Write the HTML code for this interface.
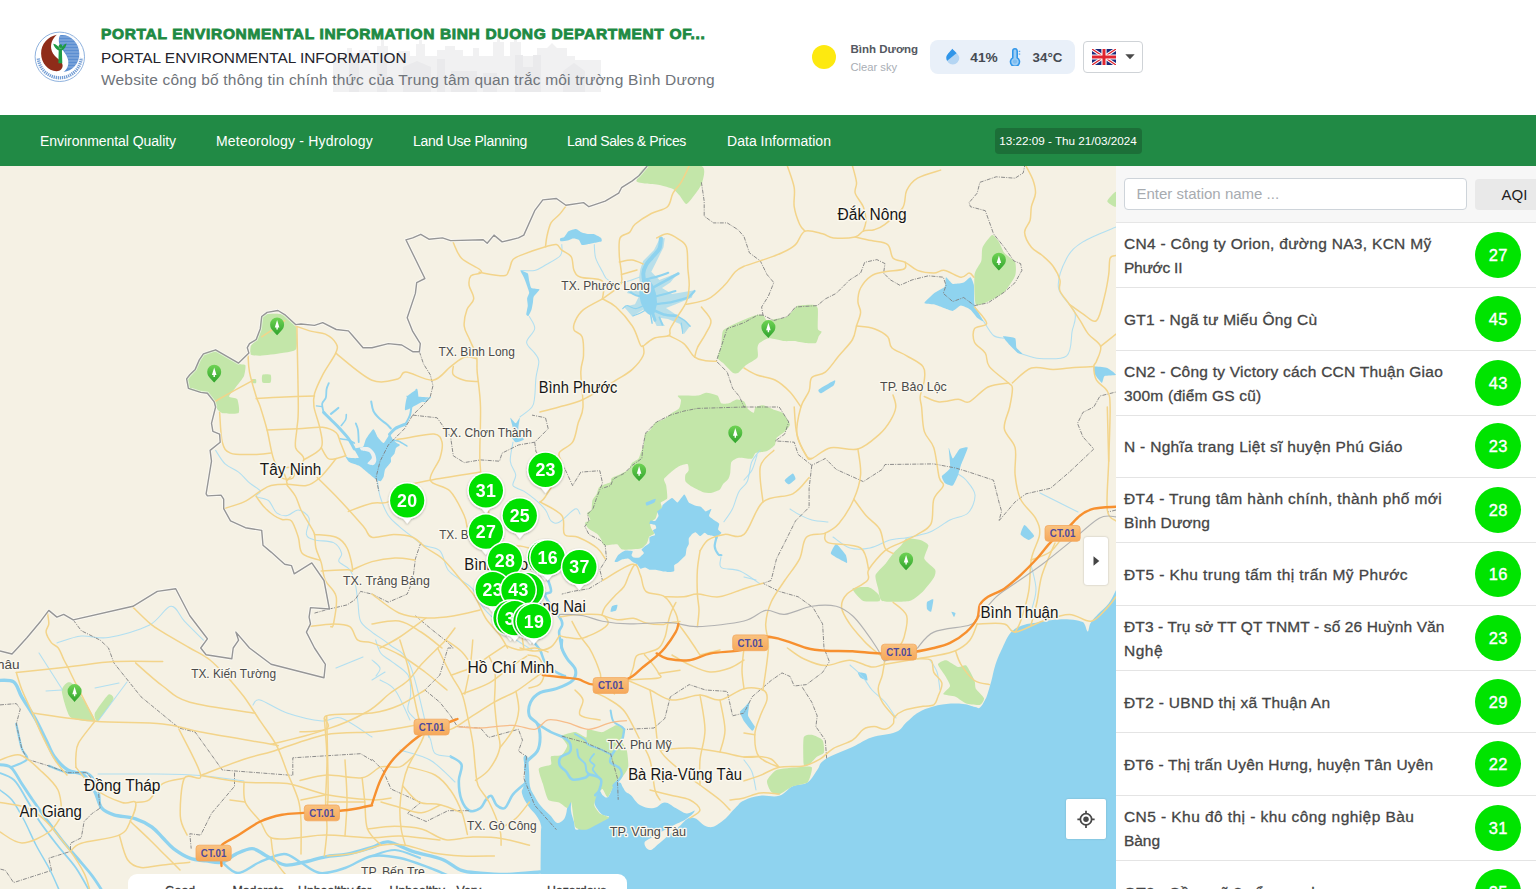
<!DOCTYPE html>
<html lang="en"><head><meta charset="utf-8"><title>Portal Environmental Information</title>
<style>
*{box-sizing:border-box;margin:0;padding:0}
html,body{width:1536px;height:889px;overflow:hidden;background:#fff;font-family:"Liberation Sans",sans-serif;}
body{position:relative}
.abs{position:absolute;white-space:nowrap}
#hdr{position:absolute;left:0;top:0;width:1536px;height:115px;background:#fff}
#sky{position:absolute;left:333px;top:33px}
#t1{left:101px;top:25px;font-size:15.5px;line-height:18px;font-weight:700;color:#1e8a43;letter-spacing:.66px;-webkit-text-stroke:.85px #1e8a43}
#t2{left:101px;top:48.5px;font-size:15.4px;line-height:18px;color:#23232b}
#t3{left:101px;top:71px;font-size:15.5px;line-height:18px;color:#6f747a;letter-spacing:.18px}
#sun{position:absolute;left:811.5px;top:44.5px;width:24.6px;height:24.6px;border-radius:50%;background:#fde910}
#w1{left:850.5px;top:41.5px;font-size:11.5px;line-height:14px;font-weight:700;color:#545861}
#w2{left:850.5px;top:60px;font-size:11.2px;line-height:14px;color:#a9aeb5}
#pill{position:absolute;left:930px;top:40px;width:144.5px;height:34px;border-radius:8px;background:#e9f0f9}
#h41{left:970.3px;top:49.7px;font-size:13.7px;line-height:16px;font-weight:700;color:#454a52}
#h34{left:1032.6px;top:49.7px;font-size:13.3px;line-height:16px;font-weight:700;color:#454a52}
#flagbox{position:absolute;left:1083px;top:41px;width:59.5px;height:32px;border:1px solid #cfd3d7;border-radius:4px;background:#fff}
#nav{position:absolute;left:0;top:115px;width:1536px;height:51px;background:#218a45}
.ni{position:absolute;top:18px;font-size:14px;line-height:17px;color:#fff;white-space:nowrap}
#time{position:absolute;left:994.5px;top:12.8px;width:147px;height:26px;border-radius:4px;background:#1c6f38;color:#fff;font-size:11.7px;line-height:26px;text-align:center;white-space:nowrap}
#map{position:absolute;left:0;top:166px;width:1116px;height:723px;overflow:hidden;background:#f5f1e4}
#panel{position:absolute;left:1116px;top:166px;width:420px;height:723px;background:#fff;overflow:hidden}
#srow{position:absolute;left:0;top:0;width:420px;height:56.9px;background:#f7f7f7;border-bottom:1px solid #e6e6e6}
#inp{position:absolute;left:8px;top:12px;width:343px;height:31.5px;border:1px solid #ced4da;border-radius:4px;background:#fff;font-size:15px;line-height:29px;color:#a7abb0;padding-left:11.5px;white-space:nowrap}
#aqi{position:absolute;left:359px;top:12.5px;width:80px;height:31.5px;border-radius:4px;background:#e9e9e9;font-size:15px;line-height:31.5px;color:#222;padding-left:26.5px}
.it{position:absolute;left:0;width:420px;border-bottom:1px solid #e4e4e4;background:#fff}
.it .tx{position:absolute;left:8px;font-size:15.5px;line-height:24px;color:#454545;letter-spacing:.3px;-webkit-text-stroke:.3px #454545;white-space:nowrap}
.it .c{position:absolute;left:359.2px;width:46px;height:46px;border-radius:50%;background:#00e400;color:#fff;font-size:16.5px;line-height:46px;text-align:center;-webkit-text-stroke:.35px #fff;letter-spacing:.2px}
#tog{position:absolute;left:1084px;top:537px;width:23.5px;height:47.5px;background:#fff;border-radius:3px;box-shadow:0 0 2px rgba(0,0,0,.25)}
#loc{position:absolute;left:1066px;top:799px;width:40px;height:40px;background:#fff;border-radius:2px;box-shadow:0 0 2px rgba(0,0,0,.18)}
#legend{position:absolute;left:128px;top:873.5px;width:499px;height:40px;background:#fff;border-radius:9px}
#legend span{position:absolute;top:10px;font-size:12.3px;line-height:14px;color:#3a3a3a;-webkit-text-stroke:.3px #3a3a3a;white-space:nowrap}
</style></head><body>
<div id="hdr">
<svg id="sky" width="269" height="59" viewBox="0 0 269 59">
<path d="M0 59V24h6v-4h8v-5h5v5h7v-3h10v6h8v-10h4v-6h3v6h4v10h10v-5h12v5h6v-12h3v-4h3v4h3v12h12v-6h8v-4h10v4h8v6h10v-8h6v8h14v-14h4v-8h3v8h4v14h6v-14h4v-8h3v8h4v14h16v-8h10l5-5 5 5h10v8h8v4h26V59Z" fill="#f1f1f2"/>
<g fill="#eaeaec"><path d="M16 59V30h10v29zM44 59V22h10v37zM70 59V34l14-6 14 6v25zM104 59V26h8v33zM118 59V38h26v21zM150 59V40h14v19zM182 59V22h8v37zM200 59V22h8v37zM190 59V34h10v25zM230 59V38l11-8 11 8v21z"/></g>
</svg>
<svg class="abs" style="left:34px;top:31px" width="52" height="52" viewBox="0 0 52 52">
<circle cx="25.8" cy="25.8" r="24.7" fill="#fff" stroke="#8fb2de" stroke-width="1"/>
<path d="M4.3 27.5 A21.6 21.6 0 0 0 47.3 27" fill="none" stroke="#5a8ccd" stroke-width="3.2" stroke-dasharray="1.3 .8" opacity=".85"/>
<path d="M22.8 3.8 C14 5.5 7 13 7.1 22.5 C7.2 32 14 40 22.5 40.2 C26 40.3 29 37.5 28.6 34 C28 29 20.5 27 17.8 20 C15.6 13.5 18.6 7.5 22.8 3.8Z" fill="#8f2c19"/>
<path d="M26 4.3 C34 2.4 45 10 45.3 22.5 C45.5 33 38 40 29.5 41 C33 38.5 35.2 34 34 28.5 C32.5 22 26.8 18.5 25.2 12.5 C24.4 9.5 24.9 6.4 26 4.3Z" fill="#5b8ed1"/>
<path d="M26 6h14M25.5 9h18M26 12h19M27 15h18.5M29 18h17M31 21h15M32.5 24h13.5M33.5 27h12M34 30h11M33.8 33h9M32.5 36h8" stroke="#d8e6f6" stroke-width=".55" opacity=".8"/>
<path d="M24.4 32.3 L24.7 19.5 C22.5 18.6 20 16 19.2 12.8 C22 13.2 24.6 15.2 25.6 17.5 C26 17 27 17 27.4 17.5 C28.3 15 30.5 13 32.6 12.6 C32.2 15.8 30.2 18.5 27.9 19.6 L28.3 32.3 Z" fill="#1f9b45"/>
<circle cx="26.5" cy="15.2" r="1.9" fill="#1f9b45"/>
</svg>
<div id="t1" class="abs">PORTAL ENVIRONMENTAL INFORMATION BINH DUONG DEPARTMENT OF...</div>
<div id="t2" class="abs">PORTAL ENVIRONMENTAL INFORMATION</div>
<div id="t3" class="abs">Website công bố thông tin chính thức của Trung tâm quan trắc môi trường Bình Dương</div>
<div id="sun"></div>
<div id="w1" class="abs">Bình Dương</div>
<div id="w2" class="abs">Clear sky</div>
<div id="pill"></div>
<svg class="abs" style="left:944px;top:47px" width="18" height="19" viewBox="0 0 18 19">
<defs><clipPath id="dc"><path d="M0 0H13L15.8 3.6 1.4 15.2H0Z"/></clipPath></defs>
<path id="dp" d="M8.3 1.7C11 5 15.3 7.5 15.3 10.9A6.5 6.5 0 1 1 2.3 10.9C2.3 7.5 6 5 8.3 1.7Z" fill="#b4d5f3"/>
<path d="M8.3 1.7C11 5 15.3 7.5 15.3 10.9A6.5 6.5 0 1 1 2.3 10.9C2.3 7.5 6 5 8.3 1.7Z" fill="#2f95e9" clip-path="url(#dc)"/></svg>
<div id="h41" class="abs">41%</div>
<svg class="abs" style="left:1009.1px;top:47.7px" width="12.9" height="18.4" viewBox="0 0 14 20">
<path d="M4.1 3.3a2.4 2.4 0 0 1 4.8 0V10.7a4.9 4.9 0 1 1 -4.8 0Z" fill="#9dcdf4" stroke="#2f95e9" stroke-width="1.7"/>
<circle cx="6.5" cy="14.8" r="2.3" fill="#7fbdf0"/>
<path d="M10.6 3.6h1.6M10.6 6.6h1.6" stroke="#2f95e9" stroke-width="1"/></svg>
<div id="h34" class="abs">34°C</div>
<div id="flagbox"><svg class="abs" style="left:7.8px;top:6.8px" width="24" height="16" viewBox="0 0 60 40" preserveAspectRatio="none">
<rect width="60" height="40" fill="#1b2a7b"/>
<path d="M0 0L60 40M60 0L0 40" stroke="#fff" stroke-width="8"/>
<path d="M0 0L60 40M60 0L0 40" stroke="#e0242f" stroke-width="3.2"/>
<path d="M30 0V40M0 20H60" stroke="#fff" stroke-width="13"/>
<path d="M30 0V40M0 20H60" stroke="#e0242f" stroke-width="7.5"/></svg>
<svg class="abs" style="left:40.5px;top:12px" width="10" height="6" viewBox="0 0 10 6"><path d="M0.3 0.3h9.4L5 5.3z" fill="#4a4a4a"/></svg></div>
</div>
<div id="nav"><div class="ni" style="left:40px;letter-spacing:-0.045px">Environmental Quality</div><div class="ni" style="left:216px;letter-spacing:0.195px">Meteorology - Hydrology</div><div class="ni" style="left:413px;letter-spacing:-0.254px">Land Use Planning</div><div class="ni" style="left:567px;letter-spacing:-0.373px">Land Sales &amp; Prices</div><div class="ni" style="left:727px;letter-spacing:0.031px">Data Information</div><div id="time">13:22:09 - Thu 21/03/2024</div></div>
<div id="map"><svg width="1116" height="723" viewBox="0 166 1116 723" style="position:absolute;left:0;top:0" font-family="'Liberation Sans',sans-serif"><rect x="0" y="166" width="1116" height="723" fill="#f5f1e4"/><path d="M540.2 893.0 C540.3 888.4 540.5 881.7 540.6 870.0 C540.7 858.3 540.8 843.5 540.9 834.5 C541.0 825.5 541.8 828.8 540.9 825.0 C540.0 821.2 538.7 819.4 536.2 815.6 C533.7 811.8 531.1 810.5 528.3 806.1 C525.5 801.7 522.9 797.6 522.0 793.5 C521.1 789.4 523.0 790.1 523.6 785.7 C524.2 781.3 525.2 777.2 525.2 771.5 C525.2 765.8 523.1 760.1 523.6 757.3 C524.1 754.5 526.5 754.5 527.6 757.3 C528.7 760.1 528.6 765.8 529.1 771.5 C529.6 777.2 528.9 781.0 529.9 785.7 C530.9 790.4 531.7 791.0 533.9 795.1 C536.1 799.2 537.6 802.0 540.9 806.1 C544.2 810.2 547.2 812.3 550.4 815.6 C553.6 818.9 554.2 821.8 556.7 822.7 C559.2 823.6 561.1 822.0 563.0 820.3 C564.9 818.6 565.2 816.8 566.1 814.0 C567.0 811.2 566.7 808.6 567.7 806.1 C568.7 803.6 570.2 800.4 570.9 801.4 C571.6 802.4 570.4 806.8 571.0 810.9 C571.6 815.0 572.9 818.1 574.0 821.9 C575.1 825.7 574.2 829.2 576.4 829.8 C578.6 830.4 581.4 826.4 585.0 825.0 C588.6 823.6 589.8 824.3 594.5 822.7 C599.2 821.1 607.1 818.8 608.7 817.2 C610.3 815.6 604.6 816.4 602.4 814.8 C600.2 813.2 599.2 811.7 597.6 809.3 C596.0 806.9 595.0 805.8 594.5 803.0 C594.0 800.2 594.4 797.6 595.3 795.1 C596.2 792.6 597.7 790.3 599.2 790.4 C600.7 790.5 601.4 794.1 603.0 795.5 C604.6 796.9 605.7 797.9 607.1 797.5 C608.5 797.1 608.9 795.9 610.2 793.5 C611.5 791.1 611.5 787.9 613.4 785.7 C615.3 783.5 617.8 782.2 619.7 782.5 C621.6 782.8 621.5 785.3 622.8 787.2 C624.1 789.1 624.4 790.4 626.0 792.0 C627.6 793.6 627.8 792.4 630.7 795.1 C633.6 797.8 635.7 802.7 640.4 805.3 C645.1 807.9 649.1 808.6 654.0 808.0 C658.9 807.4 660.5 802.5 664.8 802.5 C669.1 802.5 671.4 805.8 675.7 808.0 C680.0 810.2 682.7 812.9 686.5 813.4 C690.3 813.9 694.7 809.6 694.7 810.7 C694.7 811.8 691.4 815.5 686.5 818.8 C681.6 822.1 677.3 823.2 670.3 827.0 C663.3 830.8 656.5 834.6 651.3 837.8 C646.1 841.0 644.8 840.8 644.5 843.2 C644.2 845.6 646.9 850.0 649.9 850.0 C652.9 850.0 653.7 847.8 659.4 843.2 C665.1 838.6 671.9 832.1 678.4 827.0 C684.9 821.9 686.0 817.5 692.0 817.5 C698.0 817.5 702.2 826.2 708.2 827.0 C714.2 827.8 716.4 825.3 721.8 821.5 C727.2 817.7 730.9 812.2 735.3 808.0 C739.7 803.8 739.0 802.9 744.0 800.5 C749.0 798.1 753.3 796.7 760.3 795.8 C767.3 794.9 772.7 797.7 779.2 795.8 C785.7 793.9 787.1 789.0 792.8 786.3 C798.5 783.6 802.8 785.5 807.7 782.2 C812.6 778.9 813.7 774.6 817.2 770.0 C820.7 765.4 818.2 763.8 825.3 759.2 C832.4 754.6 843.3 751.3 852.5 747.0 C861.7 742.7 862.7 740.5 871.4 737.5 C880.1 734.5 888.7 735.2 895.8 732.1 C902.9 729.0 902.2 725.9 906.7 722.0 C911.2 718.1 913.3 715.4 918.4 712.4 C923.5 709.4 926.8 708.5 932.4 706.8 C938.0 705.1 940.2 704.6 946.4 704.0 C952.6 703.4 957.5 703.4 963.2 704.0 C968.9 704.6 971.6 706.3 975.0 707.0 C978.4 707.7 978.0 708.9 980.0 707.5 C982.0 706.1 983.5 702.7 985.0 700.0 C986.5 697.3 986.3 697.7 987.5 694.0 C988.7 690.3 989.6 687.4 991.2 681.6 C992.8 675.8 993.2 671.5 995.4 664.8 C997.6 658.1 999.3 654.4 1002.4 648.0 C1005.5 641.6 1006.9 637.1 1010.8 632.6 C1014.7 628.1 1017.0 627.6 1022.0 625.6 C1027.0 623.6 1029.8 623.9 1036.0 622.8 C1042.2 621.7 1046.1 620.7 1052.8 620.0 C1059.5 619.3 1064.0 619.2 1069.6 619.5 C1075.2 619.8 1078.0 620.6 1081.0 621.5 C1084.0 622.4 1083.1 622.0 1084.5 624.0 C1085.9 626.0 1086.6 631.7 1087.8 631.5 C1089.0 631.3 1088.6 626.4 1090.6 623.0 C1092.6 619.6 1094.0 618.4 1097.6 614.4 C1101.2 610.4 1105.2 608.0 1108.8 603.2 C1112.4 598.4 1113.6 594.4 1115.8 590.6 C1118.0 586.8 1119.2 585.3 1120.0 584.0 L1120 895 L540.2 895Z" fill="#8fd3ef"/><g fill="#c3e6a9"><path d="M261.7 316.5 C262.4 315.0 264.8 314.0 267.0 313.8 C269.2 313.6 280.4 313.4 283.3 314.6 C286.2 315.8 294.3 322.6 295.6 326.0 C296.9 329.4 297.5 346.3 296.1 349.0 C294.7 351.7 285.6 352.4 282.0 353.1 C278.4 353.8 263.4 355.7 260.3 355.8 C257.2 355.9 251.8 355.3 250.8 354.4 C249.9 353.4 250.3 347.8 250.8 346.3 C251.3 344.8 255.2 341.3 256.2 339.5 C257.1 337.7 259.8 331.0 260.3 328.7 C260.9 326.4 261.0 318.0 261.7 316.5Z"/><path d="M215.6 350.4 C219.1 351.3 235.6 361.9 238.6 363.4 C241.6 364.9 244.9 364.0 245.4 365.3 C245.9 366.6 244.9 373.9 244.0 376.1 C243.1 378.3 237.4 385.0 235.9 387.0 C234.4 389.0 229.0 395.3 229.1 396.5 C229.2 397.7 236.4 397.6 237.3 399.2 C238.2 400.8 240.1 411.6 238.6 413.0 C237.1 414.4 224.3 413.6 222.0 413.0 C219.7 412.4 216.4 408.1 215.6 407.0 C214.8 405.9 215.0 403.3 214.2 401.9 C213.4 400.5 209.8 394.4 207.4 393.2 C205.0 392.0 191.9 391.1 189.8 389.7 C187.7 388.3 186.1 380.9 186.6 378.9 C187.1 376.9 193.5 371.9 195.2 369.4 C196.9 366.9 201.4 355.8 203.4 353.9 C205.4 352.0 212.1 349.4 215.6 350.4Z"/><path d="M262.5 374.8 C263.3 374.0 269.8 374.0 270.6 374.8 C271.4 375.6 271.4 381.6 270.6 382.4 C269.8 383.2 263.3 383.2 262.5 382.4 C261.7 381.6 261.7 375.6 262.5 374.8Z"/><path d="M252.0 379.4 C252.4 379.0 255.6 379.0 256.0 379.4 C256.4 379.8 256.4 382.6 256.0 383.0 C255.6 383.4 252.4 383.4 252.0 383.0 C251.6 382.6 251.6 379.8 252.0 379.4Z"/><path d="M647.2 166.0 C653.7 164.5 695.9 164.4 701.4 166.0 C706.9 167.6 702.8 179.6 702.3 182.3 C701.8 185.0 697.6 190.9 696.0 193.1 C694.4 195.3 688.1 203.7 686.5 204.0 C684.9 204.3 681.1 197.3 679.8 195.8 C678.4 194.3 675.0 190.1 673.0 189.0 C671.0 187.9 662.1 185.5 659.4 185.0 C656.7 184.5 648.2 184.0 645.9 183.6 C643.6 183.2 636.3 182.7 636.4 180.9 C636.5 179.1 640.7 167.5 647.2 166.0Z"/><path d="M723.1 330.6 C724.6 328.3 733.2 324.4 736.5 322.9 C739.8 321.4 752.9 316.1 755.6 315.3 C758.3 314.5 762.1 314.7 763.3 315.3 C764.4 315.9 766.0 320.6 767.1 321.0 C768.2 321.4 772.8 319.5 774.7 319.1 C776.6 318.7 784.3 318.1 786.2 317.2 C788.1 316.2 792.8 310.8 793.9 309.6 C795.0 308.5 795.8 306.2 797.7 305.7 C799.6 305.2 811.0 304.5 813.0 304.8 C815.0 305.1 817.3 306.2 817.8 308.6 C818.3 311.0 817.4 326.4 817.8 328.7 C818.2 331.0 821.5 330.8 821.6 331.6 C821.7 332.4 819.3 335.2 818.7 336.3 C818.1 337.4 817.2 342.3 815.9 343.0 C814.6 343.7 807.5 343.2 805.3 343.0 C803.1 342.8 796.0 341.3 793.9 341.1 C791.8 340.9 786.8 341.4 784.3 341.1 C781.8 340.8 771.5 338.0 769.0 338.2 C766.5 338.4 760.5 342.0 759.4 343.0 C758.2 344.0 757.7 346.4 757.5 347.8 C757.3 349.2 758.6 355.7 757.5 357.4 C756.4 359.1 748.0 363.5 746.1 365.0 C744.2 366.5 739.7 371.9 738.4 372.7 C737.1 373.5 734.2 373.7 732.7 372.7 C731.2 371.7 724.6 364.6 723.1 363.1 C721.6 361.6 717.6 359.1 717.4 357.4 C717.2 355.7 720.6 348.6 721.2 345.9 C721.8 343.2 721.6 332.9 723.1 330.6Z"/><path d="M992.1 235.1 C993.7 234.6 997.7 240.1 998.9 241.9 C1000.1 243.7 1002.7 250.8 1004.3 252.8 C1005.9 254.8 1014.0 260.0 1015.1 262.3 C1016.2 264.6 1016.2 272.8 1015.1 275.8 C1014.0 278.8 1007.0 289.5 1004.3 292.1 C1001.6 294.7 990.9 300.4 988.0 301.6 C985.1 302.8 977.1 307.0 975.8 304.3 C974.4 301.6 974.0 278.8 974.5 274.5 C975.0 270.2 980.5 263.6 981.3 260.9 C982.1 258.2 981.5 249.9 982.6 247.3 C983.7 244.7 990.5 235.6 992.1 235.1Z"/><path d="M1107.3 201.2 C1107.3 199.7 1115.1 191.2 1116.0 191.8 C1116.9 192.4 1116.9 205.8 1116.0 206.7 C1115.1 207.6 1107.3 202.7 1107.3 201.2Z"/><path d="M678.2 395.6 C679.9 395.2 695.4 395.9 698.2 395.6 C701.0 395.3 704.0 392.8 705.9 392.8 C707.8 392.8 715.9 394.6 717.4 395.6 C718.9 396.7 720.1 402.5 721.2 403.3 C722.3 404.1 727.3 403.7 728.8 403.3 C730.3 402.9 735.0 399.6 736.5 399.4 C738.0 399.2 743.0 400.4 744.1 401.4 C745.2 402.4 747.0 407.9 748.0 409.0 C749.0 410.1 752.9 413.0 753.7 412.8 C754.5 412.6 754.6 407.9 755.6 407.1 C756.6 406.3 761.4 404.9 763.3 405.2 C765.2 405.5 772.8 409.2 774.7 410.0 C776.6 410.8 780.9 411.4 782.4 412.8 C783.9 414.2 789.8 422.4 790.0 424.3 C790.2 426.2 785.6 430.7 784.3 432.0 C783.0 433.3 777.7 436.4 776.7 437.7 C775.7 439.0 775.7 444.0 774.7 445.3 C773.7 446.6 769.0 450.3 767.1 451.1 C765.2 451.9 757.1 452.2 755.6 453.0 C754.1 453.8 753.5 458.2 751.8 458.7 C750.1 459.2 740.8 457.4 738.8 457.7 C736.8 458.0 732.2 460.5 731.4 462.0 C730.5 463.5 730.6 471.0 730.3 472.7 C730.0 474.4 729.0 477.9 728.2 479.1 C727.5 480.3 723.7 483.3 722.8 484.4 C721.9 485.5 720.8 488.9 719.6 489.8 C718.4 490.7 712.8 492.8 711.1 493.0 C709.4 493.2 704.4 492.5 702.5 491.9 C700.6 491.3 693.5 487.7 691.8 486.6 C690.1 485.5 686.0 482.4 685.4 481.2 C684.8 480.0 685.1 475.9 685.4 474.8 C685.7 473.7 688.4 471.6 688.6 470.5 C688.8 469.4 688.5 464.5 687.5 464.1 C686.5 463.7 680.7 465.4 679.0 466.3 C677.3 467.2 671.9 471.4 670.4 472.7 C668.9 474.0 664.4 477.8 664.0 479.1 C663.6 480.4 665.9 483.6 666.2 485.5 C666.5 487.4 667.7 496.6 667.2 498.3 C666.7 500.0 661.3 501.6 660.8 502.6 C660.3 503.6 662.2 506.9 661.9 507.9 C661.6 508.9 658.2 511.1 657.6 512.2 C657.0 513.3 656.2 517.5 655.5 518.6 C654.8 519.7 650.5 521.9 650.1 522.9 C649.7 523.9 650.8 527.1 651.2 528.2 C651.6 529.3 654.6 532.7 654.4 533.6 C654.2 534.5 649.9 535.8 649.1 536.8 C648.4 537.8 647.8 542.0 646.9 543.2 C646.0 544.4 643.0 547.9 640.5 548.5 C638.0 549.1 624.8 550.0 622.4 549.6 C620.0 549.2 618.8 544.7 617.0 544.3 C615.2 543.9 605.8 545.8 604.2 545.3 C602.6 544.8 601.8 540.1 601.0 538.9 C600.2 537.7 598.0 534.7 596.7 533.6 C595.4 532.5 589.4 529.3 588.2 528.2 C587.0 527.1 584.8 523.8 585.0 522.9 C585.2 522.0 590.1 520.7 590.3 519.7 C590.5 518.7 587.0 514.3 587.1 513.3 C587.2 512.3 590.9 511.4 591.4 510.1 C591.9 508.8 591.9 502.0 592.4 500.4 C592.9 498.8 596.1 495.3 596.7 494.0 C597.4 492.7 598.1 488.6 598.9 487.6 C599.6 486.6 603.0 484.9 604.2 484.4 C605.4 483.9 609.9 482.9 610.6 482.3 C611.4 481.7 610.6 478.9 611.7 478.0 C612.8 477.1 619.6 474.6 621.3 473.7 C623.0 472.8 627.7 470.6 628.8 469.5 C629.9 468.4 631.0 464.1 632.0 463.0 C633.0 461.9 637.5 459.8 638.4 458.8 C639.2 457.8 640.0 454.8 640.5 453.4 C641.0 452.0 643.3 446.8 643.7 444.9 C644.1 443.0 644.2 435.7 644.8 434.2 C645.4 432.7 649.0 431.1 650.1 429.9 C651.2 428.7 654.1 423.5 655.5 422.4 C656.9 421.3 662.5 420.1 664.0 419.2 C665.5 418.3 668.9 415.0 670.4 413.9 C671.9 412.8 677.9 409.9 679.0 408.5 C680.1 407.1 681.1 401.3 681.0 400.0 C680.9 398.7 676.5 396.0 678.2 395.6Z"/><path d="M906.7 538.5 C908.6 538.0 918.0 539.2 920.2 539.9 C922.4 540.6 928.0 543.4 928.4 545.3 C928.8 547.2 923.6 556.4 924.3 558.8 C925.0 561.2 934.2 567.8 935.2 569.7 C936.2 571.6 935.0 575.6 933.8 577.8 C932.6 580.0 925.4 589.1 923.0 591.4 C920.6 593.7 913.5 599.9 909.4 600.9 C905.3 601.9 885.4 602.1 882.3 600.9 C879.2 599.7 878.9 591.3 878.2 588.7 C877.5 586.1 874.8 577.5 875.5 575.1 C876.2 572.7 883.2 566.5 885.0 564.3 C886.8 562.1 891.5 555.3 893.1 553.4 C894.7 551.5 899.9 546.8 901.3 545.3 C902.7 543.8 904.8 539.0 906.7 538.5Z"/><path d="M852.5 588.7 C853.0 587.3 866.1 586.8 868.7 587.3 C871.3 587.8 877.1 592.7 878.2 594.1 C879.3 595.5 881.1 600.2 879.6 600.9 C878.1 601.6 866.0 602.1 863.3 600.9 C860.6 599.7 852.0 590.1 852.5 588.7Z"/><path d="M66.4 683.2 C67.5 682.5 70.4 680.9 73.2 684.6 C76.0 688.3 95.2 716.6 94.9 719.9 C94.6 723.2 73.8 720.1 70.5 717.2 C67.2 714.4 62.2 694.8 61.8 691.4 C61.4 688.0 65.3 683.9 66.4 683.2Z"/><path d="M94.9 713.1 C96.0 710.4 106.7 696.0 108.5 694.6 C110.3 693.2 114.4 696.8 113.3 699.5 C112.2 702.2 99.4 719.8 97.6 721.2 C95.8 722.6 93.8 715.8 94.9 713.1Z"/><path d="M538.8 768.7 C539.6 766.8 549.8 765.8 551.0 764.6 C552.2 763.4 549.9 757.5 551.0 756.5 C552.1 755.5 560.2 756.2 561.8 755.1 C563.4 754.0 567.2 747.5 567.2 745.6 C567.2 743.7 561.0 737.5 561.8 736.1 C562.6 734.8 573.0 732.0 575.4 732.1 C577.8 732.2 585.0 737.8 586.2 737.5 C587.4 737.2 586.0 729.8 587.6 729.3 C589.2 728.8 599.7 732.5 602.5 732.1 C605.3 731.7 613.8 725.6 616.0 725.3 C618.2 725.0 623.7 727.8 624.2 729.3 C624.8 730.8 621.2 738.0 621.5 740.2 C621.8 742.4 626.2 748.3 626.9 751.0 C627.6 753.7 628.7 764.6 628.2 767.3 C627.7 770.0 622.7 776.8 621.5 778.2 C620.3 779.6 617.4 779.0 616.0 780.9 C614.6 782.8 609.2 796.3 607.9 797.1 C606.5 797.9 603.6 789.3 602.5 789.0 C601.4 788.7 597.9 792.8 597.1 794.4 C596.3 796.0 594.0 803.4 594.3 805.3 C594.6 807.2 598.3 812.2 599.8 813.4 C601.3 814.6 609.0 816.7 609.3 817.5 C609.6 818.3 604.8 820.3 602.5 821.5 C600.2 822.7 588.9 829.2 586.2 829.7 C583.5 830.2 576.9 829.7 575.4 827.0 C573.9 824.3 572.1 804.4 571.3 802.5 C570.5 800.6 568.4 808.0 567.2 808.0 C566.0 808.0 561.0 803.3 559.1 802.5 C557.2 801.7 549.8 801.7 548.2 799.8 C546.6 797.9 543.7 786.7 542.8 783.6 C541.9 780.5 538.0 770.6 538.8 768.7Z"/><path d="M937.9 664.3 C938.0 662.8 944.0 659.9 946.0 660.2 C948.0 660.5 956.2 666.5 958.2 667.0 C960.2 667.5 964.7 664.2 966.3 665.6 C967.9 667.0 973.5 678.2 974.5 680.5 C975.5 682.8 974.8 686.9 975.8 688.7 C976.8 690.5 983.6 696.6 984.0 698.2 C984.4 699.8 981.7 704.4 979.9 704.9 C978.1 705.4 968.7 704.4 966.3 703.6 C963.9 702.8 957.8 697.8 955.5 696.8 C953.2 695.8 943.8 695.2 943.3 694.1 C942.8 693.0 950.0 687.9 950.1 686.0 C950.2 684.1 945.9 677.3 944.7 675.1 C943.5 672.9 937.8 665.8 937.9 664.3Z"/><path d="M803.7 737.5 C804.5 734.5 809.9 734.5 811.8 734.8 C813.7 735.1 821.4 738.4 822.6 740.2 C823.8 742.0 824.5 750.8 824.0 752.4 C823.5 754.0 818.7 755.3 817.2 756.5 C815.7 757.7 810.5 763.8 809.1 764.6 C807.8 765.4 804.2 767.3 803.7 764.6 C803.2 761.9 802.9 740.5 803.7 737.5Z"/><path d="M767.0 780.9 C767.5 778.7 773.4 771.4 776.5 770.0 C779.6 768.6 794.7 767.6 798.2 767.3 C801.7 767.0 810.8 765.8 811.8 767.3 C812.8 768.8 809.6 780.3 807.7 782.2 C805.8 784.1 795.6 785.1 792.8 786.3 C789.9 787.5 781.4 793.9 779.2 794.4 C777.0 794.9 772.3 793.1 771.1 791.7 C769.9 790.4 766.5 783.1 767.0 780.9Z"/></g><g fill="#8fd3ef"><path d="M639.5 287.0 C639.8 285.7 642.2 280.1 643.0 279.5 C643.8 278.9 648.1 279.0 649.0 279.5 C649.9 280.0 652.9 284.8 653.5 286.0 C654.1 287.2 655.7 292.6 656.0 294.0 C656.3 295.4 657.1 301.6 657.0 303.0 C656.9 304.4 655.6 310.0 655.0 311.0 C654.4 312.0 650.8 315.0 650.0 315.0 C649.2 315.0 645.8 312.0 645.0 311.0 C644.2 310.0 641.5 304.3 641.0 303.0 C640.5 301.7 639.6 296.3 639.5 295.0 C639.4 293.7 639.2 288.3 639.5 287.0Z"/><path d="M560.0 238.4 C560.3 238.0 563.6 237.5 564.3 236.9 C565.0 236.3 567.7 231.8 568.7 231.1 C569.7 230.4 574.9 228.8 576.0 228.9 C577.1 229.0 580.9 232.1 581.9 232.5 C582.9 232.9 586.7 233.9 587.7 234.0 C588.7 234.1 592.5 233.7 593.6 234.0 C594.7 234.3 600.2 237.1 600.9 237.7 C601.6 238.3 602.1 240.9 601.6 241.3 C601.1 241.7 596.3 242.6 595.1 242.8 C593.9 243.0 588.8 244.0 587.7 244.2 C586.6 244.4 582.6 245.4 581.9 245.0 C581.2 244.6 579.7 240.5 579.0 239.9 C578.3 239.3 574.1 238.3 573.1 238.4 C572.1 238.5 568.3 240.4 567.3 240.6 C566.3 240.8 561.3 241.5 560.7 241.3 C560.1 241.1 559.7 238.8 560.0 238.4Z"/><path d="M520.5 270.6 C520.8 270.2 527.1 272.6 527.8 273.5 C528.5 274.4 528.9 279.6 529.2 280.8 C529.5 282.0 530.5 287.4 531.4 288.1 C532.3 288.8 539.3 288.9 539.5 289.6 C539.7 290.3 534.1 295.8 533.6 296.9 C533.1 298.0 533.1 301.6 532.9 302.7 C532.7 303.8 531.8 309.0 531.4 310.1 C531.0 311.2 528.9 315.5 528.5 315.9 C528.1 316.3 526.4 315.2 526.3 314.4 C526.2 313.5 527.7 307.0 527.8 305.7 C527.9 304.4 527.0 299.5 527.1 298.4 C527.2 297.3 529.3 293.7 529.2 292.5 C529.1 291.3 526.7 284.9 526.3 283.7 C525.9 282.5 524.6 279.0 524.1 277.9 C523.6 276.8 520.2 271.0 520.5 270.6Z"/><path d="M407.2 396.5 C408.2 394.8 415.8 389.7 416.7 389.7 C417.6 389.7 417.1 395.8 418.1 396.5 C419.1 397.2 429.3 396.9 428.9 397.8 C428.4 398.7 414.7 406.0 412.7 407.0 C410.7 408.0 405.5 410.9 405.0 410.0 C404.5 409.1 406.2 398.2 407.2 396.5Z"/><path d="M924.3 302.9 C924.3 302.0 932.1 294.8 933.8 293.4 C935.5 292.0 943.7 288.1 944.7 286.7 C945.7 285.3 945.3 277.4 946.0 277.2 C946.7 277.0 951.3 283.4 952.8 283.9 C954.3 284.3 962.1 283.2 963.6 282.6 C965.1 282.0 969.5 277.0 970.4 277.2 C971.3 277.4 973.6 283.0 973.9 285.3 C974.2 287.6 974.0 301.8 974.5 304.3 C975.0 306.8 979.1 313.6 979.9 315.1 C980.7 316.6 984.2 321.7 984.0 321.9 C983.8 322.1 978.3 318.8 977.2 317.8 C976.1 316.8 971.8 310.7 970.4 309.7 C969.0 308.7 962.4 305.5 960.9 305.6 C959.4 305.7 954.1 310.8 952.8 311.0 C951.4 311.2 946.3 308.9 944.7 308.3 C943.1 307.7 935.5 304.8 933.8 304.3 C932.1 303.9 924.3 303.8 924.3 302.9Z"/><path d="M1003.0 336.3 C1003.5 335.7 1014.0 337.2 1015.1 338.2 C1016.2 339.1 1015.8 346.3 1016.5 347.7 C1017.2 349.1 1023.2 353.9 1023.3 354.4 C1023.4 354.8 1019.0 353.9 1017.9 353.1 C1016.8 352.3 1010.9 346.4 1009.7 345.0 C1008.5 343.6 1002.5 336.9 1003.0 336.3Z"/><path d="M818.6 389.7 C819.7 388.6 833.6 380.5 834.8 380.2 C836.0 379.9 834.6 384.5 833.5 385.6 C832.4 386.7 822.5 392.9 821.3 393.2 C820.1 393.5 817.5 390.8 818.6 389.7Z"/><path d="M1093.8 366.6 C1094.8 366.0 1105.5 367.3 1107.3 368.0 C1109.1 368.7 1116.2 374.1 1116.0 374.8 C1115.8 375.5 1105.8 375.4 1104.6 376.1 C1103.4 376.8 1102.7 383.0 1101.9 382.9 C1101.1 382.8 1095.8 376.2 1095.1 374.8 C1094.4 373.4 1092.8 367.2 1093.8 366.6Z"/><path d="M344.8 455.6 C344.8 455.3 347.3 457.6 348.5 457.8 C349.7 458.0 358.2 458.5 358.7 457.8 C359.2 457.1 354.0 449.9 354.4 449.0 C354.8 448.1 362.1 447.7 363.1 446.8 C364.1 445.9 365.2 440.2 366.1 438.7 C367.0 437.2 372.4 429.3 373.4 429.2 C374.4 429.1 376.9 436.1 377.8 437.3 C378.7 438.5 382.6 443.3 383.6 443.1 C384.6 442.9 388.8 434.8 389.5 434.4 C390.2 434.0 391.9 438.0 392.4 438.7 C392.9 439.4 395.4 442.0 396.0 442.5 C396.6 443.0 400.0 444.5 400.0 445.0 C400.0 445.5 396.5 447.3 396.0 448.0 C395.5 448.7 394.9 452.6 394.5 453.4 C394.1 454.2 391.2 457.1 390.9 457.8 C390.6 458.5 391.4 461.1 390.9 462.1 C390.4 463.1 385.7 468.3 385.1 469.5 C384.5 470.7 384.0 475.8 383.6 476.8 C383.2 477.8 381.3 481.0 380.7 481.2 C380.1 481.4 377.3 480.3 376.3 479.7 C375.3 479.1 370.3 474.9 369.0 473.8 C367.7 472.7 361.5 467.4 360.2 466.5 C358.9 465.6 353.9 464.0 352.9 463.6 C351.9 463.2 349.2 462.1 348.5 461.4 C347.8 460.7 344.8 455.9 344.8 455.6Z"/><path d="M510.3 417.8 C510.5 417.4 514.9 423.3 515.7 423.3 C516.5 423.3 519.6 417.4 519.8 417.8 C520.0 418.2 518.1 426.9 518.4 428.7 C518.7 430.5 524.0 438.4 523.8 439.5 C523.6 440.6 516.7 442.4 515.7 442.2 C514.7 442.0 511.8 437.9 511.6 436.8 C511.4 435.7 513.1 430.3 513.0 428.7 C512.9 427.1 510.1 418.2 510.3 417.8Z"/><path d="M614.6 561.4 C614.7 560.8 617.2 556.1 618.0 555.2 C618.8 554.3 623.5 551.0 624.7 550.7 C625.9 550.4 632.0 550.9 632.6 551.3 C633.2 551.7 631.4 554.7 631.5 555.2 C631.6 555.7 633.0 557.3 633.7 557.5 C634.4 557.7 638.5 557.9 639.4 557.5 C640.2 557.1 643.7 553.7 643.9 553.0 C644.1 552.3 641.5 550.2 641.6 549.6 C641.7 549.0 644.3 546.8 645.0 546.2 C645.7 545.6 649.1 543.6 649.5 542.9 C649.9 542.1 649.0 537.9 649.5 537.2 C650.0 536.5 654.8 535.6 655.1 535.0 C655.4 534.4 652.8 531.1 652.9 530.5 C653.0 529.9 656.0 528.7 656.2 528.2 C656.4 527.7 655.7 525.3 655.1 524.9 C654.5 524.5 649.9 524.1 649.5 523.7 C649.1 523.3 650.1 520.6 650.6 520.4 C651.1 520.2 654.4 521.3 655.1 520.9 C655.8 520.5 658.3 516.7 658.5 515.9 C658.7 515.1 657.0 512.1 657.3 511.4 C657.6 510.7 661.3 508.6 661.8 508.0 C662.3 507.4 662.1 505.4 663.0 504.6 C663.9 503.8 670.8 498.1 672.0 497.9 C673.2 497.7 676.6 502.7 677.6 502.4 C678.6 502.1 683.4 494.5 684.3 494.5 C685.2 494.5 687.9 501.5 688.8 502.4 C689.7 503.3 694.6 505.3 695.6 505.7 C696.6 506.1 700.4 506.4 701.2 506.9 C702.0 507.4 704.9 511.2 705.7 511.4 C706.5 511.6 711.0 508.7 711.3 509.1 C711.6 509.5 708.8 515.0 709.1 515.9 C709.4 516.8 713.9 519.8 714.7 520.4 C715.5 521.0 718.9 523.0 719.2 523.7 C719.5 524.5 717.9 528.6 718.1 529.4 C718.3 530.1 721.4 532.1 721.4 532.7 C721.4 533.3 718.5 535.5 718.1 536.1 C717.7 536.7 717.3 539.5 716.9 539.5 C716.5 539.5 714.4 536.5 713.6 536.1 C712.9 535.7 708.6 535.3 707.9 535.0 C707.1 534.7 705.2 532.6 704.6 532.7 C704.0 532.8 700.9 536.1 700.1 536.1 C699.4 536.1 696.3 532.4 695.6 532.2 C694.9 532.0 692.8 533.4 692.2 533.9 C691.6 534.4 689.1 537.6 688.8 538.4 C688.5 539.2 689.0 543.2 688.8 544.0 C688.6 544.8 686.9 547.6 686.6 548.5 C686.3 549.4 686.0 554.3 685.5 555.2 C685.0 556.1 681.7 559.0 681.0 559.7 C680.3 560.4 678.2 562.6 677.6 563.1 C677.0 563.6 674.5 564.6 674.2 565.3 C673.9 566.0 674.6 570.4 674.2 571.0 C673.8 571.6 670.6 572.1 669.7 572.1 C668.8 572.1 664.2 571.7 663.0 571.5 C661.8 571.3 656.2 569.9 655.1 569.8 C654.0 569.7 650.3 570.0 649.5 569.8 C648.7 569.6 645.8 567.7 645.0 567.6 C644.2 567.5 641.2 569.0 640.5 568.7 C639.8 568.4 637.8 564.8 637.1 564.2 C636.4 563.6 633.4 562.5 632.6 562.0 C631.9 561.5 629.0 558.8 628.1 558.6 C627.2 558.4 622.3 559.4 621.4 559.7 C620.5 560.0 617.5 561.9 616.9 562.0 C616.3 562.1 614.5 562.0 614.6 561.4Z"/><path d="M645.9 502.6 C646.6 502.0 654.8 498.7 655.5 498.7 C656.2 498.7 655.1 502.0 654.4 502.6 C653.7 503.2 647.6 505.8 646.9 505.8 C646.2 505.8 645.2 503.2 645.9 502.6Z"/><path d="M612.0 606.3 C612.6 605.7 617.1 604.6 617.4 604.9 C617.7 605.2 616.6 609.8 616.0 610.4 C615.4 611.0 610.9 612.0 610.6 611.7 C610.3 611.4 611.4 606.9 612.0 606.3Z"/><path d="M948.7 447.7 C948.9 446.9 951.9 458.4 952.8 458.5 C953.7 458.6 958.4 449.9 959.6 449.0 C960.8 448.1 967.6 446.3 967.7 447.7 C967.8 449.1 961.7 463.0 960.9 465.3 C960.1 467.6 958.9 473.1 958.2 474.8 C957.5 476.5 953.9 484.9 952.8 485.6 C951.7 486.3 945.6 483.7 944.7 482.9 C943.8 482.1 941.4 477.3 941.9 476.1 C942.4 474.9 949.5 470.4 950.1 468.0 C950.7 465.6 948.5 448.5 948.7 447.7Z"/><path d="M784.7 480.2 C785.0 479.3 791.9 473.5 792.8 473.4 C793.7 473.3 795.8 478.0 795.5 478.9 C795.2 479.8 789.6 484.2 788.7 484.3 C787.8 484.4 784.4 481.1 784.7 480.2Z"/><path d="M830.8 553.4 C830.6 552.2 835.0 543.8 836.2 543.9 C837.4 544.0 844.8 553.2 845.7 554.8 C846.6 556.4 847.6 562.6 847.0 562.9 C846.4 563.2 840.2 559.6 838.9 558.8 C837.5 558.0 831.0 554.6 830.8 553.4Z"/><path d="M1020.6 534.4 C1020.3 533.2 1023.5 524.9 1024.6 525.0 C1025.7 525.1 1033.8 534.6 1034.1 535.8 C1034.4 537.0 1029.8 540.0 1028.7 539.9 C1027.6 539.8 1020.9 535.6 1020.6 534.4Z"/><path d="M927.0 602.2 C927.5 601.4 933.0 598.7 933.3 599.5 C933.6 600.3 931.6 610.9 931.1 611.7 C930.6 612.5 927.3 609.8 927.0 609.0 C926.7 608.2 926.5 603.0 927.0 602.2Z"/><path d="M951.4 611.7 C951.5 611.4 955.3 612.6 955.5 613.1 C955.7 613.6 954.4 617.2 954.1 617.1 C953.8 617.0 951.3 612.0 951.4 611.7Z"/><path d="M744.0 707.7 C744.8 706.9 749.1 701.5 749.4 702.2 C749.7 702.9 747.6 713.8 748.1 715.8 C748.6 717.8 754.5 725.4 754.8 726.6 C755.1 727.8 753.0 731.2 752.1 730.7 C751.2 730.2 745.0 722.8 744.0 721.2 C743.0 719.6 740.0 713.1 740.0 712.0 C740.0 710.9 743.2 708.5 744.0 707.7Z"/><path d="M857.9 672.4 C858.4 672.1 865.2 673.1 866.0 673.8 C866.8 674.5 867.9 680.2 867.4 680.5 C866.9 680.8 861.4 678.5 860.6 677.8 C859.8 677.1 857.4 672.7 857.9 672.4Z"/></g><g fill="none" stroke="#8fd3ef" stroke-linecap="round" stroke-linejoin="round"><path d="M660.9 238.4 C660.6 240.1 660.9 245.4 659.4 248.6 C657.9 251.8 654.3 254.7 652.1 257.4 C649.9 260.1 647.7 262.0 646.2 264.7 C644.7 267.4 643.5 270.3 643.3 273.5 C643.1 276.7 644.5 282.0 644.8 283.7" stroke-width="4"/><path d="M646.5 294.0 C646.7 295.4 646.8 299.8 647.7 302.7 C648.6 305.6 651.4 310.0 652.1 311.5" stroke-width="5.5"/><path d="M652.1 311.5 L655.0 320.3" stroke-width="3"/><path d="M646.2 279.3 C648.2 278.8 654.2 277.5 657.9 276.4 C661.6 275.3 666.5 273.4 668.2 272.8" stroke-width="2.2"/><path d="M652.1 288.1 C654.3 286.9 660.9 283.2 665.3 280.8 C669.7 278.4 676.2 274.7 678.4 273.5" stroke-width="2.6"/><path d="M653.6 296.9 C655.5 296.4 661.6 295.0 665.3 294.0 C668.9 293.0 673.8 291.5 675.5 291.0" stroke-width="2"/><path d="M655.0 304.2 C657.2 303.9 664.1 303.4 668.2 302.7 C672.4 302.0 676.5 300.8 679.9 299.8 C683.3 298.8 686.3 298.4 688.7 296.9 C691.1 295.4 693.5 292.0 694.5 291.0" stroke-width="2.3"/><path d="M653.6 310.1 C655.3 310.8 659.9 313.4 663.8 314.4 C667.7 315.4 674.8 315.6 677.0 315.9" stroke-width="2.6"/><path d="M659.4 317.4 L662.3 324.7" stroke-width="1.8"/><path d="M677.0 315.9 C678.2 316.6 682.1 318.6 684.3 320.3 C686.5 322.0 689.1 325.1 690.1 326.1" stroke-width="1.5"/><path d="M681.3 323.2 L682.8 333.5" stroke-width="1.2"/><path d="M644.8 296.9 C643.3 296.6 638.7 296.4 636.0 295.4 C633.3 294.4 629.9 291.7 628.7 291.0" stroke-width="2"/><path d="M646.2 304.2 C644.5 304.9 639.2 308.4 636.0 308.6 C632.8 308.9 629.4 305.7 627.2 305.7 C625.0 305.7 623.5 308.1 622.8 308.6" stroke-width="1.2"/><path d="M647.7 308.6 C646.5 309.3 642.8 311.8 640.4 313.0 C638.0 314.2 634.3 315.4 633.1 315.9" stroke-width="1.2"/><path d="M650.6 314.4 L652.1 323.2" stroke-width="1.5"/><path d="M354.4 449.0 C353.4 447.3 350.9 442.1 348.5 438.7 C346.1 435.3 342.6 431.7 339.7 428.5 C336.8 425.3 333.7 422.4 331.0 419.7 C328.3 417.0 324.8 413.6 323.6 412.4" stroke-width="3"/><path d="M323.6 412.4 C323.4 410.9 321.8 406.0 322.2 403.6 C322.6 401.2 325.1 400.2 325.8 397.8 C326.5 395.4 326.1 391.4 326.6 389.0 C327.1 386.6 328.4 384.2 328.8 383.2" stroke-width="1.8"/><path d="M331.0 413.9 L338.3 408.0" stroke-width="2.2"/><path d="M341.2 425.6 C341.9 424.6 344.8 421.5 345.6 419.7 C346.5 417.9 346.2 415.5 346.3 414.6" stroke-width="1.6"/><path d="M339.7 438.7 C341.2 438.9 346.1 439.5 348.5 440.2 C350.9 440.9 353.4 442.6 354.4 443.1" stroke-width="1.6"/><path d="M316.3 405.8 L322.2 406.6" stroke-width="1.3"/><path d="M358.7 442.0 C358.6 440.0 358.5 433.1 358.0 430.0 C357.5 426.9 356.2 424.5 355.8 423.4" stroke-width="1.8"/><path d="M390.9 428.5 C390.2 427.8 388.4 425.8 386.5 424.1 C384.6 422.4 381.4 420.5 379.2 418.3 C377.0 416.1 374.7 413.8 373.4 411.0 C372.1 408.2 371.6 403.0 371.2 401.4" stroke-width="2"/><path d="M389.5 434.4 C390.5 433.4 392.6 430.2 395.3 428.5 C398.0 426.8 403.8 424.8 405.5 424.1" stroke-width="3"/><path d="M405.5 424.1 C406.2 422.6 408.9 418.2 409.9 415.3 C410.9 412.4 410.9 409.3 411.4 406.6 C411.9 403.9 411.9 400.7 412.9 399.2 C413.9 397.7 416.6 399.4 417.2 397.8 C417.8 396.2 416.6 391.1 416.5 389.7" stroke-width="2"/><path d="M407.0 396.3 L411.4 399.2" stroke-width="1.3"/><path d="M417.2 397.8 C418.4 398.4 422.4 401.5 424.6 401.4 C426.8 401.3 429.4 397.8 430.4 397.1" stroke-width="1.3"/><path d="M390.9 440.2 C392.1 440.3 395.5 440.0 398.2 441.0 C400.9 442.0 405.5 445.2 407.0 446.1" stroke-width="1.4"/><path d="M717.5 534.0 C717.0 536.0 714.6 542.9 714.7 546.2 C714.8 549.6 717.0 552.6 718.1 554.1 C719.2 555.6 720.9 555.0 721.4 555.2" stroke-width="2.2"/></g><path d="M640.4 269.0 L643.1 260.9 L654.0 250.1 L659.4 239.2 L664.8 237.9 L663.5 247.3 L656.7 260.9 L651.3 271.7 L659.4 279.9 L678.4 272.5 L670.3 282.6 L662.0 288.0 L672.0 294.0 L693.3 290.5 L692.0 297.5 L675.7 304.3 L666.0 308.0 L678.0 316.0 L690.0 326.0 L684.0 334.0 L680.0 324.0 L668.0 319.0 L659.4 317.8 L664.8 326.0 L656.7 326.0 L651.3 315.1 L643.1 309.7 L632.3 316.5 L624.2 307.0 L635.0 304.3 L639.1 296.1 L626.9 293.0 L629.6 289.4 L640.4 286.7 L639.1 277.2Z" fill="#8fd3ef" fill-opacity=".6"/><path d="M360.2 447.5 C361.2 447.1 367.1 446.7 369.0 447.5 C370.9 448.3 373.8 451.6 374.8 453.4 C375.8 455.2 376.5 459.1 376.3 460.7 C376.1 462.3 374.6 464.7 373.4 465.1 C372.2 465.5 367.7 464.6 367.5 463.6 C367.3 462.6 371.7 459.4 371.9 457.8 C372.1 456.2 370.4 452.9 369.0 451.9 C367.6 450.9 362.9 451.0 361.7 450.4 C360.5 449.8 359.2 447.9 360.2 447.5Z" fill="#eef0ee"/><g fill="none" stroke="#8fd3ef" stroke-linecap="round" stroke-linejoin="round"><path d="M-3.0 680.5 C-0.2 680.7 9.5 679.2 13.6 681.9 C17.7 684.6 18.1 690.7 21.7 696.8 C25.3 702.9 31.1 711.3 35.2 718.5 C39.3 725.7 42.9 733.9 46.1 740.2 C49.3 746.5 50.6 751.5 54.2 756.5 C57.8 761.5 62.8 766.9 67.8 770.0 C72.8 773.1 79.6 771.8 84.1 775.4 C88.6 779.0 92.0 786.3 94.9 791.7 C97.8 797.1 98.5 804.1 101.7 808.0 C104.9 811.9 108.2 813.0 113.9 814.8 C119.6 816.6 129.3 816.8 135.6 818.8 C141.9 820.8 147.3 823.8 151.8 827.0 C156.3 830.2 159.1 834.2 162.7 837.8 C166.3 841.4 169.0 845.2 173.5 848.6 C178.0 852.0 184.4 856.1 189.8 858.1 C195.2 860.1 200.7 860.2 206.1 860.9 C211.5 861.6 217.3 863.3 222.3 862.2 C227.3 861.1 230.9 856.4 235.9 854.1 C240.9 851.8 247.2 848.4 252.2 848.6 C257.2 848.8 260.3 852.7 265.7 855.4 C271.1 858.1 278.4 863.8 284.7 864.9 C291.0 866.0 296.9 863.6 303.7 862.2 C310.5 860.9 318.2 858.1 325.4 856.8 C332.6 855.4 339.3 855.7 347.1 854.1 C354.9 852.5 365.1 849.3 372.0 847.3 C378.9 845.3 381.5 841.2 388.3 841.9 C395.1 842.6 403.7 848.5 412.7 851.4 C421.7 854.3 434.4 856.3 442.5 859.5 C450.6 862.7 455.2 868.1 461.5 870.4 C467.8 872.7 472.8 872.4 480.5 873.1 C488.2 873.8 497.7 874.6 507.6 874.4 C517.5 874.2 534.6 872.4 540.0 872.0" stroke-width="3.4"/><path d="M-3.0 764.6 C-0.7 765.0 6.7 764.1 10.8 767.3 C14.9 770.5 18.1 778.2 21.7 783.6 C25.3 789.0 28.4 793.9 32.5 799.8 C36.6 805.7 41.1 812.0 46.1 818.8 C51.1 825.6 57.0 833.7 62.4 840.5 C67.8 847.3 73.6 853.6 78.6 859.5 C83.6 865.4 88.1 870.4 92.2 875.8 C96.3 881.2 101.2 889.3 103.0 892.0" stroke-width="2.8"/><path d="M-3.0 772.0 C-0.2 773.3 9.0 775.3 14.0 780.0 C19.0 784.7 22.7 793.0 27.0 800.0 C31.3 807.0 34.8 814.3 40.0 822.0 C45.2 829.7 52.0 838.3 58.0 846.0 C64.0 853.7 70.7 860.3 76.0 868.0 C81.3 875.7 87.7 888.0 90.0 892.0" stroke-width="1.8"/><path d="M16.3 723.9 C17.2 728.0 19.9 742.4 21.7 748.3 C23.5 754.2 28.9 756.0 27.1 759.2 C25.3 762.4 13.5 765.9 10.8 767.3" stroke-width="2.2"/><path d="M222.3 862.2 C224.9 864.0 231.7 873.0 238.0 873.0 C244.3 873.0 252.3 865.2 260.0 862.0 C267.7 858.8 277.3 854.0 284.0 854.0 C290.7 854.0 294.0 858.8 300.0 862.0 C306.0 865.2 312.5 872.0 320.0 873.0 C327.5 874.0 336.3 870.8 345.0 868.0 C353.7 865.2 362.8 857.7 372.0 856.0 C381.2 854.3 390.3 856.0 400.0 858.0 C409.7 860.0 420.8 864.7 430.0 868.0 C439.2 871.3 446.7 875.3 455.0 878.0 C463.3 880.7 469.2 882.7 480.0 884.0 C490.8 885.3 513.3 885.7 520.0 886.0" stroke-width="2.4"/><path d="M372.0 856.0 C375.8 855.0 387.0 849.7 395.0 850.0 C403.0 850.3 415.8 856.7 420.0 858.0" stroke-width="2.2"/><path d="M48.8 765.9 C52.0 767.0 61.5 771.6 67.8 772.7 C74.1 773.8 81.8 770.4 86.8 772.7 C91.8 775.0 95.3 780.4 97.6 786.3 C99.8 792.2 99.8 804.4 100.3 808.0" stroke-width="2.2"/><path d="M0.0 790.0 C2.0 791.7 8.0 795.0 12.0 800.0 C16.0 805.0 20.0 812.5 24.0 820.0 C28.0 827.5 31.7 836.7 36.0 845.0 C40.3 853.3 46.0 862.2 50.0 870.0 C54.0 877.8 58.3 888.3 60.0 892.0" stroke-width="1.5"/><path d="M561.8 640.0 C561.8 641.3 560.9 644.9 561.8 648.0 C562.7 651.1 564.9 655.2 567.2 658.8 C569.5 662.4 574.5 666.1 575.4 669.7 C576.3 673.3 575.8 677.3 572.6 680.5 C569.4 683.7 561.8 686.7 556.4 688.7 C551.0 690.7 544.4 690.5 540.1 692.7 C535.8 695.0 532.4 698.4 530.6 702.2 C528.8 706.1 528.2 712.2 529.3 715.8 C530.4 719.4 535.6 720.3 537.4 723.9 C539.2 727.5 540.1 733.0 540.1 737.5 C540.1 742.0 539.6 746.9 537.4 751.0 C535.1 755.1 528.6 758.7 526.6 761.9 C524.6 765.1 525.7 768.6 525.5 770.0" stroke-width="3"/><path d="M548.2 580.5 C548.7 582.3 551.5 588.7 551.0 591.4 C550.5 594.1 543.7 591.8 545.5 596.8 C547.3 601.8 559.5 615.3 561.8 621.2 C564.1 627.1 559.1 627.6 559.1 632.1 C559.1 636.6 561.3 645.4 561.8 648.0" stroke-width="2.6"/><path d="M524.5 784.0 C522.6 785.7 516.3 790.4 513.0 794.4 C509.7 798.4 507.6 806.2 504.9 808.0 C502.2 809.8 499.0 807.3 496.7 805.3 C494.4 803.3 493.1 796.7 491.3 795.8 C489.5 794.9 487.7 797.8 485.9 799.8 C484.1 801.8 483.2 806.2 480.5 808.0 C477.8 809.8 472.8 812.1 469.6 810.7 C466.4 809.3 463.3 804.8 461.5 799.8 C459.7 794.8 458.8 786.8 458.8 780.9 C458.8 775.0 462.9 768.7 461.5 764.6 C460.1 760.5 452.4 757.9 450.6 756.5" stroke-width="2.6"/><path d="M537.4 723.9 C539.7 725.3 546.7 729.9 551.0 732.1 C555.3 734.3 560.0 735.4 563.0 737.0 C566.0 738.6 568.0 740.2 569.3 742.0 C570.6 743.8 570.9 746.1 570.9 747.9 C570.9 749.7 571.0 751.0 569.3 752.6 C567.6 754.2 562.2 755.2 560.6 757.3 C559.0 759.4 558.9 762.8 559.8 765.2 C560.7 767.6 564.0 769.1 566.1 771.5 C568.2 773.9 569.2 778.4 572.4 779.4 C575.5 780.4 582.1 778.6 585.0 777.8 C587.9 777.0 587.2 774.3 589.8 774.6 C592.4 774.9 599.2 776.8 600.8 779.4 C602.4 782.0 600.1 787.8 599.2 790.4 C598.3 793.0 595.9 794.3 595.3 795.1" stroke-width="2.6"/><path d="M577.2 749.4 C577.5 750.7 577.4 754.9 578.7 757.3 C580.0 759.7 583.7 761.2 585.0 763.6 C586.3 766.0 585.8 769.7 586.6 771.5 C587.4 773.3 589.3 774.1 589.8 774.6" stroke-width="2"/><path d="M594.0 754.0 C593.3 755.1 589.7 758.6 589.8 760.5 C589.9 762.4 594.0 763.6 594.5 765.2 C595.0 766.8 591.9 767.5 592.9 769.9 C593.9 772.3 599.5 777.8 600.8 779.4" stroke-width="1.8"/><path d="M624.2 729.3 C623.8 731.1 623.8 736.1 622.0 740.0 C620.2 743.9 615.4 748.9 613.4 752.6 C611.4 756.3 609.2 759.4 610.2 762.0 C611.2 764.6 617.9 765.9 619.7 768.3 C621.6 770.7 622.3 773.3 621.3 776.2 C620.2 779.1 614.7 784.1 613.4 785.7" stroke-width="2.4"/><path d="M575.0 734.0 C576.7 735.0 582.8 738.2 585.0 740.0 C587.2 741.8 585.6 743.1 588.2 744.7 C590.8 746.3 597.1 747.8 600.8 749.4 C604.5 751.0 608.1 753.7 610.2 754.2 C612.3 754.7 612.9 752.9 613.4 752.6" stroke-width="1.8"/><path d="M610.6 710.4 C611.0 712.2 611.5 718.5 613.3 721.2 C615.1 723.9 619.7 725.2 621.5 726.6 C623.3 728.0 623.8 728.8 624.2 729.3" stroke-width="2"/><path d="M532.0 640.0 C533.3 641.7 537.8 646.3 540.0 650.0 C542.2 653.7 542.3 658.3 545.0 662.0 C547.7 665.7 552.7 669.7 556.0 672.0 C559.3 674.3 563.5 675.3 565.0 676.0" stroke-width="2.5"/></g><g fill="none" stroke="#a5dcf3" stroke-width="1.05" stroke-linecap="round" stroke-opacity=".85"><path d="M375.6 640.0 C376.5 642.2 378.3 649.9 381.0 653.5 C383.7 657.1 387.3 658.0 391.8 661.6 C396.3 665.2 404.9 669.7 408.0 675.1 C411.1 680.5 410.7 688.1 410.7 694.0 C410.7 699.9 406.8 705.5 408.0 710.2 C409.2 714.9 414.4 717.5 418.0 722.0 C421.6 726.5 426.8 732.0 429.6 737.2 C432.4 742.4 431.5 750.2 435.0 753.4 C438.5 756.6 448.0 756.0 450.6 756.5"/><path d="M720.9 557.5 C721.0 559.2 718.2 565.4 721.4 567.6 C724.6 569.9 733.6 568.3 740.0 571.0 C746.4 573.7 756.7 581.7 760.0 583.8"/><path d="M760.0 450.2 C758.6 452.2 753.8 456.8 751.7 462.0 C749.6 467.2 749.5 476.2 747.4 481.2 C745.2 486.2 741.3 487.3 738.8 491.9 C736.3 496.5 734.9 504.0 732.4 509.0 C729.9 514.0 725.3 519.7 723.9 521.8"/><path d="M561.8 244.6 C561.6 246.4 563.1 252.1 560.4 255.5 C557.7 258.9 549.8 262.5 545.5 265.0 C541.2 267.5 538.8 269.5 534.7 270.4 C530.6 271.3 523.4 270.4 521.1 270.4"/><path d="M529.3 316.5 C530.2 318.5 535.2 324.4 534.7 328.7 C534.2 333.0 526.6 338.1 526.6 342.2 C526.6 346.3 532.7 349.9 534.7 353.1 C536.7 356.3 538.6 357.1 538.8 361.2 C539.0 365.3 536.7 371.6 536.0 377.5 C535.3 383.4 535.4 391.6 534.7 396.5 C534.0 401.4 534.5 403.6 532.0 407.0 C529.5 410.4 522.0 415.3 520.0 417.0"/><path d="M594.3 244.6 C594.5 246.9 594.3 253.7 595.7 258.2 C597.1 262.7 600.5 268.1 602.5 271.7 C604.5 275.3 604.7 278.1 607.9 279.9 C611.1 281.7 616.3 283.1 621.5 282.6 C626.7 282.2 636.2 278.1 639.1 277.2"/><path d="M984.0 321.9 C985.6 324.2 990.1 332.8 993.5 335.5 C996.9 338.2 1002.5 337.8 1004.3 338.2"/><path d="M1023.3 354.4 C1026.0 355.1 1032.4 358.3 1039.6 358.5 C1046.8 358.7 1061.3 360.3 1066.7 355.8 C1072.1 351.3 1070.8 338.6 1072.1 331.4 C1073.4 324.2 1077.1 319.6 1074.8 312.4 C1072.5 305.2 1059.8 297.0 1058.5 288.0 C1057.2 279.0 1062.6 265.9 1066.7 258.2 C1070.8 250.5 1074.7 247.1 1082.9 241.9 C1091.1 236.7 1110.5 229.5 1116.0 227.0"/><path d="M215.6 450.4 C217.2 452.6 221.3 460.3 225.1 463.9 C228.9 467.5 234.5 468.9 238.6 472.1 C242.7 475.3 245.9 479.7 249.5 482.9 C253.1 486.1 259.2 488.8 260.3 491.1 C261.4 493.4 254.8 494.9 256.2 496.5 C257.5 498.1 265.0 497.8 268.4 500.5 C271.8 503.2 273.4 510.3 276.6 512.8 C279.8 515.3 283.8 516.0 287.4 515.5 C291.0 515.0 294.7 509.6 298.3 510.0 C301.9 510.4 307.8 514.1 309.1 518.2 C310.5 522.3 305.5 530.8 306.4 534.4 C307.3 538.0 310.0 538.5 314.5 539.9 C319.0 541.3 329.0 540.4 333.5 542.6 C338.0 544.9 340.7 550.2 341.6 553.4 C342.5 556.6 337.5 558.9 338.9 561.6 C340.3 564.3 347.1 566.1 349.8 569.7 C352.5 573.3 353.9 577.9 355.2 583.3 C356.5 588.7 357.0 595.9 357.9 602.2 C358.8 608.5 358.2 616.2 360.6 621.2 C363.0 626.2 367.1 628.1 372.0 632.1 C376.9 636.1 383.7 639.5 390.0 645.0 C396.3 650.5 403.5 649.6 410.0 665.0 C416.5 680.4 425.8 725.4 428.9 737.5"/><path d="M56.9 642.9 C61.0 641.8 72.7 637.0 81.3 636.1 C89.9 635.2 97.2 639.3 108.5 637.5 C119.8 635.7 138.7 630.5 149.1 625.3 C159.5 620.1 164.9 607.0 170.8 606.3 C176.7 605.6 179.0 615.6 184.4 621.2 C189.8 626.9 200.2 637.0 203.4 640.2"/><path d="M513.0 442.2 C512.5 445.4 509.9 455.8 510.3 461.2 C510.8 466.6 515.2 470.7 515.7 474.8 C516.2 478.9 511.7 482.9 513.0 485.6 C514.4 488.3 520.2 488.8 523.8 491.1 C527.4 493.4 531.1 496.1 534.7 499.2 C538.3 502.3 542.8 506.4 545.5 510.0 C548.2 513.6 548.7 518.9 551.0 520.9 C553.3 522.9 555.1 524.2 559.1 522.2 C563.1 520.2 571.5 510.4 575.0 509.0 C578.5 507.6 579.2 513.2 580.0 514.0"/><path d="M377.4 480.2 C377.8 482.9 378.3 490.6 380.1 496.5 C381.9 502.4 385.1 510.5 388.3 515.5 C391.5 520.5 395.0 522.7 399.1 526.3 C403.2 529.9 408.6 534.0 412.7 537.2 C416.8 540.4 419.0 543.0 423.5 545.3 C428.0 547.5 435.7 546.6 439.8 550.7 C443.9 554.8 444.3 564.7 447.9 569.7 C451.5 574.7 457.4 577.3 461.5 580.5 C465.6 583.7 468.7 584.2 472.3 588.7 C475.9 593.2 478.7 601.7 483.2 607.6 C487.7 613.5 494.5 618.9 499.5 623.9 C504.5 628.9 507.6 633.1 513.0 637.5 C518.4 641.9 528.8 647.9 532.0 650.0"/><path d="M39.0 653.0 L62.0 689.0"/><path d="M46.0 691.0 L62.0 690.0"/><path d="M95.0 688.0 L119.0 683.0"/><path d="M127.0 682.0 L98.0 721.0"/><path d="M98.0 774.0 C107.3 774.0 137.0 773.8 154.0 774.0 C171.0 774.2 185.0 774.3 200.0 775.5 C215.0 776.7 236.7 780.1 244.0 781.0"/><path d="M336.0 668.0 L363.0 657.0"/><path d="M253.0 705.0 C254.2 704.2 254.3 698.7 260.0 700.0 C265.7 701.3 276.7 709.5 287.0 713.0 C297.3 716.5 313.0 720.2 322.0 721.0 C331.0 721.8 332.7 715.3 341.0 718.0 C349.3 720.7 366.8 733.8 372.0 737.0"/><path d="M790.0 509.0 C791.7 510.0 796.3 513.2 800.0 515.0 C803.7 516.8 807.3 518.8 812.0 520.0 C816.7 521.2 825.3 521.7 828.0 522.0"/><path d="M833.0 537.0 C835.8 538.8 843.8 546.2 850.0 548.0 C856.2 549.8 863.3 549.3 870.0 548.0 C876.7 546.7 884.0 541.7 890.0 540.0 C896.0 538.3 903.3 538.3 906.0 538.0"/><path d="M906.0 538.0 C910.0 537.0 922.7 535.0 930.0 532.0 C937.3 529.0 943.7 523.2 950.0 520.0 C956.3 516.8 963.8 517.2 968.0 513.0 C972.2 508.8 975.3 500.5 975.0 495.0 C974.7 489.5 968.8 483.5 966.0 480.0 C963.2 476.5 959.3 475.0 958.0 474.0"/><path d="M744.0 480.0 C745.3 478.3 749.8 474.2 752.0 470.0 C754.2 465.8 756.2 457.5 757.0 455.0"/><path d="M744.0 577.0 L756.0 580.0"/><path d="M1040.0 493.0 C1043.3 494.7 1053.7 499.8 1060.0 503.0 C1066.3 506.2 1075.0 510.5 1078.0 512.0"/><path d="M1031.0 565.0 C1031.8 569.2 1036.2 581.7 1036.0 590.0 C1035.8 598.3 1031.0 610.8 1030.0 615.0"/><path d="M850.0 665.0 C852.0 666.8 858.3 671.8 862.0 676.0 C865.7 680.2 868.2 685.7 872.0 690.0 C875.8 694.3 881.0 697.3 885.0 702.0 C889.0 706.7 894.2 715.3 896.0 718.0"/><path d="M744.0 760.0 C745.3 762.0 750.0 767.0 752.0 772.0 C754.0 777.0 755.3 787.0 756.0 790.0"/><path d="M930.0 660.0 C931.2 662.0 935.3 667.0 937.0 672.0 C938.7 677.0 939.5 687.0 940.0 690.0"/><path d="M372.0 660.0 C373.3 661.3 379.3 665.3 380.0 668.0 C380.7 670.7 376.7 674.7 376.0 676.0"/><path d="M380.0 680.0 C382.5 681.7 390.0 683.3 395.0 690.0 C400.0 696.7 407.5 715.0 410.0 720.0"/><path d="M400.0 750.0 C405.0 751.7 420.8 754.7 430.0 760.0 C439.2 765.3 450.8 778.3 455.0 782.0"/><path d="M372.0 680.0 L385.0 672.0"/></g><g fill="none" stroke="#808080" stroke-width=".9" stroke-dasharray="4 1.2 1 1.2"><path d="M419.4 351.7 L423.5 363.9 L430.3 374.8 L433.0 385.6 L430.3 396.5 L426.2 401.9 L418.0 410.0 L412.7 415.1 L404.5 428.7 L388.3 445.0 L380.1 461.2 L376.0 477.5 L378.8 491.1"/><path d="M701.4 182.3 L704.2 201.2 L704.2 216.2 L713.6 222.9 L727.2 222.9 L738.0 229.7 L744.0 236.5 L749.4 252.8 L760.3 260.9 L767.0 274.5 L773.8 282.6 L768.4 296.1 L761.6 307.0 L763.0 315.1 L773.8 320.6 L787.4 316.5 L795.5 307.0 L817.2 305.6 L825.3 298.9 L836.2 293.4 L849.7 279.9 L860.6 273.1 L864.7 262.3 L876.9 259.6 L885.0 263.6 L883.6 273.1 L890.4 279.9 L899.9 285.3 L912.1 279.9 L928.4 275.8 L943.3 277.2 L946.0 285.3 L943.3 293.4 L952.8 301.6 L963.6 297.5 L974.5 305.6 L988.0 302.9 L1004.3 292.1 L1015.1 282.6 L1021.9 270.4 L1020.6 263.6 L1013.8 260.9 L1004.3 247.3 L993.5 233.8 L990.7 225.7 L985.3 210.7 L970.4 206.7 L969.1 202.6 L977.2 193.1 L979.9 182.3 L996.2 176.8 L1015.1 178.2 L1023.3 172.8 L1024.6 166.0"/><path d="M763.0 315.1 L757.6 315.1 L744.0 322.7 L727.2 328.7 L721.8 345.0 L716.4 361.2 L727.2 372.1 L732.6 388.3 L739.4 396.5 L744.0 407.0 L760.0 407.0 L779.2 407.0 L788.7 421.9 L784.7 434.1 L775.2 440.9 L794.2 442.2 L798.2 454.5 L811.8 465.3 L825.3 458.5 L836.2 469.4 L863.3 481.6 L882.3 469.4 L885.0 464.5 L933.8 463.9 L955.5 468.0 L969.1 472.1 L993.5 480.2 L998.9 501.9 L1001.6 511.4 L998.9 520.9 L1015.1 501.9 L1026.0 493.8 L1050.4 488.3 L1069.4 472.1 L1093.8 449.0 L1082.9 436.8 L1077.5 423.3 L1082.9 412.4 L1093.8 407.0 L1100.0 396.0 L1116.0 392.0"/><path d="M811.8 465.3 L809.1 488.3 L809.1 507.3 L795.5 520.9 L784.7 542.6 L776.5 558.8 L771.1 580.5 L763.0 583.3 L779.2 591.4 L798.2 596.8 L813.1 607.6 L822.6 623.9 L824.0 648.0 L829.4 661.6 L822.6 672.4 L806.4 684.6 L794.2 686.0 L790.1 676.5 L782.0 672.9 L771.1 680.5 L752.1 696.8 L744.0 713.1 L732.6 715.8 L727.2 691.4 L705.5 690.0 L689.2 684.6 L670.3 696.8 L664.8 718.5 L654.0 728.0 L626.9 729.3"/><path d="M802.3 687.3 L811.8 702.2 L817.2 715.8 L815.9 726.6 L825.3 740.2 L826.7 759.2"/><path d="M412.7 415.1 L437.1 417.8 L450.6 436.8 L453.3 455.8 L464.2 462.6 L480.5 459.9 L499.5 461.2 L502.1 453.1 L518.4 445.0 L534.7 442.2 L548.2 428.7 L545.5 417.8 L532.0 415.1"/><path d="M534.7 442.2 L536.0 452.0 L548.0 460.0 L564.5 468.0 L572.6 485.6 L580.8 472.1 L599.8 470.7 L602.5 482.9 L597.1 496.5 L593.0 508.7 L587.6 514.1 L588.9 520.9 L584.8 526.3 L588.9 534.4 L599.8 539.9 L605.2 545.3 L606.5 558.8 L599.8 569.7 L602.5 580.5 L588.9 588.7 L572.6 591.4 L561.8 594.1"/><path d="M745.0 407.0 L697.4 408.4 L683.8 411.1 L670.3 415.1 L656.7 421.9 L645.9 432.8 L643.1 445.0 L641.8 458.5 L632.3 465.3 L624.2 473.4 L613.3 478.9 L610.6 485.6 L602.5 488.3"/><path d="M372.0 594.1 L388.3 602.2 L407.2 594.1 L412.7 580.5 L415.4 558.8 L420.8 542.6"/><path d="M415.4 615.8 L431.6 629.4 L445.2 640.2 L453.3 648.0 L447.9 648.0 L439.8 675.1 L424.9 690.0 L439.8 702.2 L450.6 715.8 L457.4 726.6 L480.5 728.0 L488.6 737.5 L518.4 729.3 L522.5 740.2 L518.4 751.0 L526.6 756.5"/><path d="M372.0 759.2 L382.8 770.0 L391.0 789.0 L420.8 802.5 L407.2 813.4 L426.2 821.5 L447.9 810.7 L469.6 810.7"/><path d="M314.5 613.1 L329.4 609.0 L347.1 604.9 L355.2 599.5 L360.6 591.4 L372.0 594.1"/><path d="M73.2 619.9 L81.3 630.7 L100.3 640.2 L108.5 648.0 L113.9 662.9 L141.0 696.8 L179.0 728.0 L195.2 732.1 L222.3 770.0 L292.8 775.4 L292.8 757.8 L360.6 753.7 L372.0 760.5"/><path d="M234.5 772.7 L234.5 786.3 L211.5 813.4 L200.7 835.1 L189.8 833.7 L191.2 848.6"/><path d="M0.0 704.9 L16.3 703.6 L20.3 709.0 L16.3 723.9 L21.7 748.3 L27.1 759.2 L48.8 765.9 L67.8 772.7 L86.8 772.7 L97.6 786.3 L100.3 808.0 L92.2 813.4 L84.1 821.5 L81.3 837.8 L70.5 843.2 L70.5 851.4 L48.8 858.2 L51.5 870.4 L13.6 882.6 L5.4 870.4 L0.0 869.0"/><path d="M561.8 736.1 L586.2 742.9 L610.6 753.7 L617.4 778.2 L618.2 799.8"/><path d="M526.6 756.5 L523.8 778.2 L534.7 805.3 L556.4 829.7"/><path d="M1116.0 510.0 L1108.0 512.0"/></g><g fill="none" stroke="#f3d48a" stroke-width="1.5" stroke-linecap="round" stroke-linejoin="round"><path d="M296.9 327.3 C297.1 340.6 298.3 390.1 298.3 407.0 C298.3 423.9 297.3 421.9 296.9 428.7 C296.4 435.5 294.5 442.5 295.6 447.7 C296.7 452.9 305.1 454.5 303.7 459.9 C302.3 465.3 290.1 476.8 287.4 480.2"/><path d="M295.6 326.0 C298.3 326.9 306.8 330.0 311.8 331.4 C316.8 332.8 321.3 332.1 325.4 334.1 C329.5 336.1 334.5 340.4 336.2 343.6 C337.9 346.8 337.9 347.9 335.7 353.1 C333.4 358.3 326.2 368.0 322.7 374.8 C319.2 381.6 315.9 388.4 314.5 393.8 C313.1 399.2 313.1 401.2 314.0 407.0 C314.9 412.8 318.8 421.9 320.0 428.7 C321.2 435.5 324.0 442.5 321.3 447.7 C318.6 452.9 306.6 457.9 303.7 459.9"/><path d="M335.7 353.1 C341.8 357.6 361.6 375.9 372.0 380.2 C382.4 384.5 392.2 380.2 397.8 378.9 C403.4 377.5 400.0 371.9 405.9 372.1 C411.8 372.3 425.6 381.1 433.0 380.2 C440.4 379.3 445.4 370.4 450.6 366.6 C455.8 362.8 459.9 358.6 464.2 357.2 C468.5 355.8 474.4 358.3 476.4 358.5"/><path d="M248.1 355.8 C248.3 358.5 248.2 365.3 249.5 372.1 C250.8 378.9 254.4 390.7 256.2 396.5 C258.0 402.3 258.5 401.4 260.3 407.0 C262.1 412.6 264.8 421.2 267.1 430.0 C269.4 438.8 271.0 452.4 273.9 459.9 C276.8 467.4 282.4 470.5 284.7 474.8 C286.9 479.1 286.9 483.8 287.4 485.6"/><path d="M261.7 336.8 C263.7 335.4 270.1 331.4 273.9 328.7 C277.7 326.0 282.9 322.0 284.7 320.6"/><path d="M214.2 401.9 C217.4 400.1 226.6 394.7 233.2 391.1 C239.8 387.5 250.1 382.0 253.5 380.2"/><path d="M256.2 398.6 C260.9 398.3 275.0 397.4 284.7 397.0 C294.4 396.6 309.5 396.2 314.5 396.0"/><path d="M453.3 242.7 C454.7 245.3 457.2 253.8 461.5 258.2 C465.8 262.6 475.9 266.5 479.1 269.0 C482.3 271.5 481.9 272.0 480.5 273.1 C479.1 274.2 472.9 273.8 471.0 275.8 C469.1 277.8 468.7 281.5 469.1 285.3 C469.6 289.1 474.1 294.8 473.7 298.9 C473.3 303.0 468.5 305.2 466.9 309.7 C465.3 314.2 463.8 321.0 464.2 326.0 C464.6 331.0 467.6 334.5 469.6 339.5 C471.6 344.5 475.1 350.4 476.4 355.8 C477.7 361.2 476.5 363.6 477.2 372.1 C477.9 380.6 480.1 392.1 480.5 407.0 C480.9 421.9 479.4 447.6 479.9 461.2 C480.3 474.8 481.3 478.4 483.2 488.3 C485.1 498.2 488.1 510.9 491.3 520.9 C494.5 530.9 498.5 538.1 502.1 548.0 C505.7 557.9 510.3 569.6 513.0 580.5 C515.7 591.4 516.6 601.9 518.4 613.1 C520.2 624.4 522.9 642.2 523.8 648.0"/><path d="M479.1 272.3 C483.2 272.9 498.5 276.1 503.5 275.8 C508.5 275.5 507.3 273.1 508.9 270.4 C510.5 267.7 510.5 262.3 513.0 259.6 C515.5 256.9 518.4 256.2 523.8 254.1 C529.2 252.0 540.1 248.4 545.5 246.8 C550.9 245.2 553.7 244.1 556.4 244.6 C559.1 245.1 559.3 248.1 561.8 250.1 C564.3 252.1 569.3 253.4 571.3 256.8 C573.3 260.2 572.4 267.0 574.0 270.4 C575.6 273.8 576.0 275.4 580.8 277.2 C585.5 279.0 598.9 277.6 602.5 281.2 C606.1 284.8 602.5 295.9 602.5 298.9"/><path d="M565.9 206.1 C564.8 207.6 561.6 212.0 559.1 214.8 C556.6 217.6 553.0 219.3 551.0 222.9 C549.0 226.5 547.8 232.5 546.9 236.5 C546.0 240.5 545.7 245.1 545.5 246.8"/><path d="M689.2 166.0 C687.9 168.7 683.8 177.8 681.1 182.3 C678.4 186.8 675.3 189.0 673.0 193.1 C670.7 197.2 671.1 203.3 667.5 206.7 C663.9 210.1 656.7 210.6 651.3 213.5 C645.9 216.4 638.6 221.2 635.0 224.3 C631.4 227.5 632.1 230.1 629.6 232.4 C627.1 234.7 621.8 234.1 620.1 237.9 C618.4 241.8 619.1 249.4 619.3 255.5 C619.5 261.6 621.4 269.5 621.5 274.5 C621.6 279.5 623.3 281.2 620.1 285.3 C616.9 289.4 605.4 296.6 602.5 298.9"/><path d="M656.7 237.9 C658.5 237.2 663.9 233.6 667.5 233.8 C671.1 234.0 675.2 236.9 678.4 239.2 C681.6 241.4 684.9 242.3 686.5 247.3 C688.1 252.3 687.4 262.7 687.9 269.0 C688.4 275.3 689.4 279.9 689.2 285.3 C689.0 290.7 688.3 296.6 686.5 301.6 C684.7 306.6 681.1 310.6 678.4 315.1 C675.7 319.6 671.9 325.3 670.3 328.7 C668.7 332.1 671.6 333.9 668.9 335.5 C666.2 337.1 658.3 336.4 654.0 338.2 C649.7 340.0 644.9 344.9 643.1 346.3"/><path d="M602.5 298.9 C604.8 300.2 611.0 302.5 616.0 307.0 C621.0 311.5 628.2 319.7 632.3 326.0 C636.4 332.3 638.6 341.6 640.4 345.0 C642.2 348.4 642.6 344.5 643.1 346.3 C643.6 348.1 644.9 352.0 643.1 355.8 C641.3 359.6 636.8 365.3 632.3 369.4 C627.8 373.5 624.1 375.2 616.0 380.2 C607.9 385.2 593.0 394.7 583.5 399.2 C574.0 403.7 566.4 404.9 559.1 407.0 C551.9 409.1 543.2 411.2 540.0 412.0"/><path d="M602.5 298.9 C599.3 300.7 588.0 306.1 583.5 309.7 C579.0 313.3 577.0 317.2 575.4 320.6 C573.8 324.0 572.9 327.3 574.0 330.0 C575.1 332.7 580.5 332.5 582.1 336.8 C583.7 341.1 583.7 349.9 583.5 355.8 C583.3 361.7 580.9 363.6 580.8 372.1 C580.7 380.6 583.5 398.5 583.0 407.0 C582.5 415.5 579.8 417.4 578.1 423.3 C576.4 429.2 575.8 437.2 572.6 442.2 C569.4 447.2 560.9 448.8 559.1 453.1 C557.3 457.4 564.1 460.8 561.8 468.0 C559.5 475.2 549.1 490.9 545.5 496.5 C541.9 502.1 541.0 501.0 540.1 501.9"/><path d="M668.9 335.5 C671.4 336.9 679.5 340.0 683.8 343.6 C688.1 347.2 691.1 354.4 694.7 357.2 C698.3 360.0 701.9 360.0 705.5 360.7 C709.1 361.4 714.6 361.1 716.4 361.2"/><path d="M686.5 304.3 C690.1 303.4 701.9 302.1 708.2 298.9 C714.5 295.7 720.0 289.8 724.5 285.3 C729.0 280.8 732.0 274.9 735.3 271.7 C738.5 268.5 739.8 268.1 744.0 266.3 C748.2 264.5 754.0 263.1 760.3 260.9 C766.6 258.6 776.1 255.5 782.0 252.8 C787.9 250.1 791.7 248.2 795.5 244.6 C799.3 241.0 800.5 232.9 805.0 231.1 C809.5 229.3 817.9 232.7 822.6 233.8 C827.4 234.9 828.1 237.4 833.5 237.9 C838.9 238.4 850.2 238.1 855.2 237.0 C860.2 235.9 860.1 232.3 863.3 231.1 C866.5 229.9 870.6 230.8 874.2 229.7 C877.8 228.6 880.3 227.9 885.0 224.3 C889.7 220.7 899.0 213.7 902.6 208.0 C906.2 202.3 904.2 195.4 906.7 190.4 C909.2 185.4 911.9 181.6 917.5 178.2 C923.1 174.8 936.8 171.4 940.6 170.1"/><path d="M701.4 307.0 C703.0 309.3 710.2 316.1 710.9 320.6 C711.6 325.1 707.8 329.6 705.5 334.1 C703.2 338.6 699.2 343.9 697.4 347.7 C695.6 351.5 695.2 355.6 694.7 357.2"/><path d="M619.3 262.0 C621.4 261.7 628.0 259.7 632.0 260.0 C636.0 260.3 641.2 263.3 643.0 264.0"/><path d="M621.5 274.5 L637.0 270.0"/><path d="M453.3 366.6 C453.3 368.0 451.5 372.5 453.3 374.8 C455.1 377.1 460.1 379.1 464.2 380.2 C468.3 381.3 475.4 381.4 477.7 381.6"/><path d="M787.4 166.0 C788.5 169.6 793.1 180.9 794.2 187.7 C795.3 194.5 793.3 200.6 794.2 206.7 C795.1 212.8 797.8 220.2 799.6 224.3 C801.4 228.4 804.1 230.0 805.0 231.1"/><path d="M852.5 166.0 C853.2 168.7 856.0 177.8 856.5 182.3 C857.0 186.8 854.1 189.0 855.2 193.1 C856.3 197.2 861.5 202.2 863.3 206.7 C865.1 211.2 866.0 216.1 866.0 220.2 C866.0 224.3 863.8 229.3 863.3 231.1"/><path d="M855.2 237.0 C857.9 237.6 866.0 239.3 871.4 240.6 C876.8 241.9 884.1 241.7 887.7 244.6 C891.3 247.5 890.2 255.2 893.1 258.2 C896.0 261.1 901.2 260.3 905.3 262.3 C909.4 264.3 912.8 268.6 917.5 270.4 C922.2 272.2 929.3 273.1 933.8 273.1 C938.3 273.1 940.2 269.7 944.7 270.4 C949.2 271.1 956.8 276.8 960.9 277.2 C965.0 277.6 966.9 273.1 969.1 273.1 C971.3 273.1 973.1 276.5 973.9 277.2"/><path d="M905.3 262.3 C905.1 263.4 907.4 267.4 904.0 269.0 C900.6 270.6 890.4 270.6 885.0 271.7 C879.6 272.8 875.5 273.1 871.4 275.8 C867.3 278.5 862.9 283.7 860.6 288.0 C858.4 292.3 857.9 297.5 857.9 301.6 C857.9 305.7 860.8 308.3 860.6 312.4 C860.4 316.5 857.9 321.5 856.5 326.0 C855.1 330.5 855.4 334.5 852.5 339.5 C849.6 344.5 843.4 350.4 838.9 355.8 C834.4 361.2 829.8 368.5 825.3 372.1 C820.8 375.7 814.5 374.3 811.8 377.5 C809.1 380.7 810.9 386.2 809.1 391.1 C807.3 396.0 802.9 399.8 800.9 407.0 C798.9 414.2 796.0 426.0 796.9 434.1 C797.8 442.2 803.9 451.7 806.4 455.8 C808.9 459.9 810.9 458.1 811.8 458.5"/><path d="M856.5 326.0 C859.5 326.4 869.0 326.9 874.2 328.7 C879.4 330.5 884.8 333.6 887.7 336.8 C890.6 340.0 888.6 344.5 891.8 347.7 C895.0 350.9 901.5 352.6 906.7 355.8 C911.9 359.0 920.1 362.5 923.0 366.6 C925.9 370.7 924.8 375.2 924.3 380.2 C923.8 385.2 920.7 392.0 920.2 396.5 C919.8 401.0 920.9 401.2 921.6 407.0 C922.3 412.8 922.3 424.6 924.3 431.4 C926.3 438.2 931.3 440.0 933.8 447.7 C936.3 455.4 937.6 471.2 939.2 477.5 C940.8 483.8 944.2 482.0 943.3 485.6 C942.4 489.2 935.8 492.9 933.8 499.2 C931.8 505.5 933.8 517.7 931.1 523.6 C928.4 529.5 922.5 531.2 917.5 534.4 C912.5 537.6 906.7 539.9 901.3 542.6 C895.9 545.3 890.4 546.2 885.0 550.7 C879.6 555.2 871.6 564.7 868.7 569.7 C865.8 574.7 871.0 576.4 867.4 580.5 C863.8 584.6 851.3 589.6 847.0 594.1 C842.7 598.6 841.1 602.6 841.6 607.6 C842.1 612.6 846.1 618.5 849.7 623.9 C853.3 629.3 859.7 636.2 863.3 640.2 C866.9 644.2 867.8 644.9 871.4 648.0 C875.0 651.1 882.7 657.0 885.0 658.8"/><path d="M1026.0 166.0 C1027.1 168.3 1031.2 175.1 1032.8 179.6 C1034.4 184.1 1035.7 188.6 1035.5 193.1 C1035.3 197.6 1032.3 202.2 1031.4 206.7 C1030.5 211.2 1031.2 215.9 1030.1 220.2 C1029.0 224.5 1024.4 227.9 1024.6 232.4 C1024.8 236.9 1028.5 243.5 1031.4 247.3 C1034.4 251.2 1038.7 252.3 1042.3 255.5 C1045.9 258.7 1050.2 262.2 1053.1 266.3 C1056.0 270.4 1058.8 275.8 1059.9 279.9 C1061.0 284.0 1058.3 286.6 1059.9 290.7 C1061.5 294.8 1066.0 299.3 1069.4 304.3 C1072.8 309.3 1077.0 315.6 1080.2 320.6 C1083.4 325.6 1085.0 329.8 1088.4 334.1 C1091.8 338.4 1099.2 341.8 1100.6 346.3 C1101.9 350.8 1097.6 357.8 1096.5 361.2 C1095.4 364.6 1093.8 363.4 1093.8 366.6 C1093.8 369.8 1094.2 376.1 1096.5 380.2 C1098.8 384.3 1105.0 386.6 1107.3 391.1 C1109.6 395.6 1109.9 395.3 1110.1 407.0 C1110.3 418.7 1109.2 444.0 1108.7 461.2 C1108.2 478.4 1106.1 500.1 1107.3 510.0 C1108.5 520.0 1114.5 519.1 1116.0 520.9"/><path d="M974.5 307.0 C976.5 309.7 986.7 319.7 986.7 323.3 C986.7 326.9 976.5 325.6 974.5 328.7 C972.5 331.8 972.7 338.1 974.5 342.2 C976.3 346.3 982.8 349.0 985.3 353.1 C987.8 357.2 985.5 361.6 989.4 366.6 C993.2 371.6 1004.6 379.3 1008.4 382.9 C1012.2 386.5 1012.2 384.3 1012.4 388.3 C1012.6 392.3 1011.1 400.3 1009.7 407.0 C1008.4 413.7 1003.4 421.9 1004.3 428.7 C1005.2 435.5 1013.3 440.0 1015.1 447.7 C1016.9 455.4 1014.2 466.2 1015.1 474.8 C1016.0 483.4 1017.2 492.0 1020.6 499.2 C1024.0 506.4 1032.3 512.3 1035.5 518.2 C1038.7 524.1 1040.3 527.6 1039.6 534.4 C1038.9 541.2 1033.2 549.3 1031.4 558.8 C1029.6 568.3 1030.5 581.0 1028.7 591.4 C1026.9 601.8 1022.9 614.4 1020.6 621.2 C1018.3 628.0 1016.0 630.3 1015.1 632.1"/><path d="M1012.4 382.9 C1015.6 380.4 1024.6 370.2 1031.4 368.0 C1038.2 365.8 1046.8 369.4 1053.1 369.4 C1059.4 369.4 1062.6 368.5 1069.4 368.0 C1076.2 367.5 1089.7 366.8 1093.8 366.6"/><path d="M1069.4 304.3 C1071.7 305.9 1078.4 311.1 1082.9 313.8 C1087.4 316.5 1092.9 323.6 1096.5 320.6 C1100.1 317.7 1102.6 303.8 1104.6 296.1 C1106.6 288.4 1107.8 280.8 1108.7 274.5 C1109.6 268.2 1108.9 261.4 1110.1 258.2 C1111.3 255.0 1115.0 255.9 1116.0 255.5"/><path d="M1100.6 346.3 L1116.0 334.1"/><path d="M924.3 396.5 C926.8 397.4 933.6 401.4 939.2 401.9 C944.9 402.3 953.2 399.2 958.2 399.2 C963.2 399.2 964.1 403.9 969.1 401.9 C974.1 399.9 981.5 390.2 988.0 387.0 C994.5 383.8 1005.0 383.6 1008.4 382.9"/><path d="M744.0 368.0 C746.2 369.2 751.8 373.0 757.0 375.0 C762.2 377.0 769.5 377.2 775.0 380.0 C780.5 382.8 785.7 387.5 790.0 392.0 C794.3 396.5 799.1 404.5 800.9 407.0"/><path d="M219.6 412.4 C220.1 417.4 220.5 435.4 222.3 442.2 C224.1 449.0 225.5 451.1 230.5 453.1 C235.5 455.2 245.4 454.5 252.2 454.5 C259.0 454.5 268.0 453.3 271.1 453.1"/><path d="M267.1 430.0 C272.3 429.8 289.0 429.1 298.3 428.7 C307.6 428.2 316.4 426.6 322.7 427.3 C329.0 428.0 333.3 430.3 336.2 432.8 C339.1 435.3 338.7 438.4 340.3 442.2 C341.9 446.0 344.8 453.5 345.7 455.8"/><path d="M321.3 447.7 C322.4 449.5 325.6 456.7 328.1 458.5 C330.6 460.3 333.3 458.9 336.2 458.5 C339.1 458.1 344.1 456.2 345.7 455.8"/><path d="M223.7 508.7 C227.1 507.6 237.9 504.8 244.0 501.9 C250.1 499.0 255.8 493.8 260.3 491.1 C264.8 488.4 266.6 486.7 271.1 485.6 C275.6 484.5 281.5 484.3 287.4 484.3 C293.3 484.3 301.0 486.7 306.4 485.6 C311.8 484.5 315.0 482.0 320.0 477.5 C325.0 473.0 333.5 461.7 336.2 458.5"/><path d="M287.4 485.6 C288.8 487.4 293.3 492.4 295.6 496.5 C297.9 500.6 298.5 505.0 301.0 510.0 C303.5 515.0 308.2 522.2 310.5 526.3 C312.8 530.4 313.6 530.8 314.5 534.4 C315.4 538.0 314.8 543.2 315.9 548.0 C317.0 552.8 319.7 557.5 321.3 562.9 C322.9 568.3 322.9 574.9 325.4 580.5 C327.9 586.1 334.8 589.6 336.2 596.8 C337.6 604.0 334.4 618.9 333.5 623.9 C332.6 628.9 331.2 626.1 330.8 626.6"/><path d="M256.2 496.5 C257.6 498.3 261.4 504.1 264.4 507.3 C267.3 510.5 271.0 513.5 273.9 515.5 C276.8 517.5 279.1 518.6 282.0 519.5 C284.9 520.4 288.8 517.9 291.5 520.9 C294.2 523.9 296.5 531.8 298.3 537.2 C300.1 542.6 298.7 549.6 302.3 553.4 C305.9 557.2 317.1 559.1 320.0 560.2"/><path d="M314.5 534.4 C318.1 534.9 330.8 534.9 336.2 537.2 C341.6 539.5 344.4 542.6 347.1 548.0 C349.8 553.4 352.5 566.1 352.5 569.7 C352.5 573.3 352.3 569.5 347.1 569.7 C341.9 569.9 325.6 570.8 321.3 571.0"/><path d="M317.2 477.5 C320.8 481.1 331.2 491.1 338.9 499.2 C346.6 507.3 357.8 520.0 363.3 526.3 C368.8 532.6 366.9 535.9 372.0 537.2 C377.1 538.6 386.9 534.4 393.7 534.4 C400.5 534.4 407.3 534.9 412.7 537.2 C418.1 539.5 421.2 544.4 426.2 548.0 C431.2 551.6 436.6 553.4 442.5 558.8 C448.4 564.2 456.1 574.2 461.5 580.5 C466.9 586.8 470.9 590.5 475.0 596.8 C479.1 603.1 481.8 612.2 485.9 618.5 C490.0 624.8 495.9 629.9 499.5 634.8 C503.1 639.7 506.2 645.8 507.6 648.0"/><path d="M348.4 511.4 C352.3 510.0 365.4 504.9 372.0 503.3 C378.6 501.7 383.8 504.4 388.3 501.9 C392.8 499.4 392.1 491.9 399.1 488.3 C406.1 484.7 416.7 482.9 430.3 480.2 C443.9 477.5 472.1 473.5 480.5 472.1"/><path d="M352.5 569.7 C355.8 568.4 364.9 563.6 372.0 561.6 C379.1 559.6 387.8 558.3 395.0 558.0 C402.2 557.7 411.7 559.7 415.0 560.0"/><path d="M309.1 626.6 C313.2 626.1 326.7 623.9 333.5 623.9 C340.3 623.9 345.7 623.9 349.8 626.6 C353.9 629.3 354.2 637.5 357.9 640.2 C361.6 642.9 365.0 640.4 372.0 642.9 C379.0 645.4 391.2 650.1 400.0 655.0 C408.8 659.9 417.2 666.2 425.0 672.0 C432.8 677.8 443.3 687.0 447.0 690.0"/><path d="M47.5 613.1 C47.7 614.9 49.0 620.7 48.8 623.9 C48.6 627.1 45.6 628.9 46.1 632.1 C46.6 635.3 49.5 640.2 51.5 642.9 C53.5 645.5 56.2 645.1 58.3 648.0 C60.4 650.9 62.4 656.8 64.0 660.0 C65.6 663.2 67.2 665.8 67.8 667.0"/><path d="M132.9 607.1 C135.8 609.9 145.5 619.7 150.5 623.9 C155.5 628.1 156.1 628.1 162.7 632.1 C169.2 636.1 181.9 643.4 189.8 648.0 C197.7 652.6 203.2 654.6 210.0 660.0 C216.8 665.4 227.1 677.1 230.5 680.5"/><path d="M282.0 468.0 C283.8 468.0 291.2 466.3 293.0 468.0 C294.8 469.7 294.8 476.3 293.0 478.0 C291.2 479.7 283.8 479.7 282.0 478.0 C280.2 476.3 282.0 469.7 282.0 468.0"/><path d="M397.0 439.5 C398.7 439.2 400.8 438.9 407.0 438.0 C413.2 437.1 428.2 433.3 434.0 434.0 C439.8 434.7 441.0 438.0 442.0 442.0 C443.0 446.0 441.9 451.6 440.0 458.0 C438.1 464.4 428.6 474.7 430.3 480.2 C432.0 485.7 444.4 485.2 450.0 491.0 C455.6 496.8 461.2 509.0 464.0 515.0 C466.8 521.0 466.5 525.0 467.0 527.0"/><path d="M540.1 501.9 C543.7 504.2 557.7 510.1 561.8 515.5 C565.9 520.9 561.8 530.8 564.5 534.4 C567.2 538.0 572.7 534.9 578.1 537.2 C583.5 539.5 592.6 544.4 597.1 548.0 C601.6 551.6 603.9 557.0 605.2 558.8"/><path d="M602.5 580.5 C607.5 577.8 626.0 565.2 632.3 564.3 C638.6 563.4 638.1 570.6 640.4 575.1 C642.7 579.6 641.8 587.8 645.9 591.4 C650.0 595.0 659.8 593.2 664.8 596.8 C669.8 600.4 673.4 608.6 675.7 613.1 C678.0 617.6 678.0 622.1 678.4 623.9"/><path d="M664.8 596.8 C668.0 596.8 678.4 597.2 683.8 596.8 C689.2 596.3 691.5 594.1 697.4 594.1 C703.3 594.1 711.3 597.7 719.1 596.8 C726.9 595.9 736.7 591.0 744.0 588.7 C751.3 586.5 759.8 584.2 763.0 583.3"/><path d="M700.1 550.7 C701.5 548.9 704.1 542.6 708.2 539.9 C712.3 537.2 718.5 535.3 724.5 534.4 C730.5 533.5 737.6 539.8 744.0 534.4 C750.4 529.0 754.9 508.7 763.0 501.9 C771.1 495.1 785.1 497.9 792.8 493.8 C800.5 489.7 806.4 480.2 809.1 477.5"/><path d="M763.0 501.9 C762.5 496.0 758.5 475.3 760.3 466.7 C762.1 458.1 771.5 453.1 773.8 450.4"/><path d="M700.1 550.7 C699.6 553.9 697.9 562.5 697.4 569.7 C696.9 576.9 697.1 587.4 697.4 594.1 C697.7 600.8 699.0 604.6 699.0 610.0 C699.0 615.4 697.7 623.8 697.4 626.6"/><path d="M372.0 594.1 C376.5 597.2 390.0 609.0 399.0 613.0 C408.0 617.0 417.0 617.5 426.0 618.0 C435.0 618.5 444.0 617.3 453.0 616.0 C462.0 614.7 475.5 611.0 480.0 610.0"/><path d="M372.0 624.0 C376.5 623.5 390.8 619.7 399.0 621.0 C407.2 622.3 413.8 627.5 421.0 632.0 C428.2 636.5 438.5 645.3 442.0 648.0"/><path d="M380.0 648.0 C383.2 646.2 391.3 642.5 399.0 637.5 C406.7 632.5 421.5 621.2 426.0 618.0"/><path d="M678.4 623.9 C680.3 626.6 686.4 634.8 690.0 640.0 C693.6 645.2 698.3 652.5 700.0 655.0"/><path d="M483.0 560.0 C485.8 562.5 493.8 570.0 500.0 575.0 C506.2 580.0 514.2 585.8 520.0 590.0 C525.8 594.2 530.3 596.7 535.0 600.0 C539.7 603.3 545.8 608.3 548.0 610.0"/><path d="M502.0 548.0 C505.0 547.7 513.7 545.3 520.0 546.0 C526.3 546.7 534.0 549.7 540.0 552.0 C546.0 554.3 550.2 558.2 556.0 560.0 C561.8 561.8 571.8 562.5 575.0 563.0"/><path d="M794.2 407.0 C794.7 411.5 794.9 426.0 796.9 434.1 C798.9 442.2 803.9 451.7 806.4 455.8 C808.9 459.9 807.7 459.9 811.8 458.5 C815.9 457.1 823.1 449.3 830.8 447.7 C838.5 446.1 849.8 451.3 857.9 449.0 C866.0 446.7 874.2 438.8 879.6 434.1 C885.0 429.4 887.7 425.1 890.4 420.6 C893.1 416.1 895.4 411.3 895.8 407.0 C896.2 402.7 893.5 397.0 893.0 395.0"/><path d="M857.9 449.0 C858.4 453.3 861.3 466.4 860.6 474.8 C859.9 483.2 857.4 491.1 853.8 499.2 C850.2 507.3 843.6 518.0 838.9 523.6 C834.1 529.2 830.7 530.8 825.3 533.1 C819.9 535.4 810.7 532.9 806.4 537.2 C802.1 541.5 803.2 551.6 799.6 558.8 C796.0 566.0 789.5 573.3 784.7 580.5 C780.0 587.7 774.3 595.0 771.1 602.2 C767.9 609.4 766.2 616.3 765.7 623.9 C765.2 631.5 768.9 637.0 768.4 648.0 C767.9 659.0 763.9 683.0 763.0 690.0"/><path d="M853.8 499.2 C855.8 501.9 861.7 510.5 866.0 515.5 C870.3 520.5 876.4 523.6 879.6 529.0 C882.8 534.4 882.8 543.9 885.0 548.0 C887.2 552.1 891.8 552.5 893.1 553.4"/><path d="M825.3 533.1 C825.8 534.7 822.1 540.1 828.0 542.6 C833.9 545.1 853.8 543.5 860.6 548.0 C867.4 552.5 867.4 566.1 868.7 569.7"/><path d="M1107.3 407.0 L1108.7 461.2"/><path d="M893.1 602.2 C895.4 604.5 904.9 609.9 906.7 615.8 C908.5 621.7 905.4 632.1 904.0 637.5 C902.6 642.9 899.4 646.2 898.5 648.0"/><path d="M977.2 623.9 C981.7 623.9 998.0 622.5 1004.3 623.9 C1010.6 625.3 1008.8 632.5 1015.1 632.1 C1021.4 631.7 1033.2 624.2 1042.3 621.2 C1051.3 618.2 1061.3 614.4 1069.4 614.4 C1077.5 614.4 1084.8 622.3 1091.1 621.2 C1097.4 620.1 1103.1 611.7 1107.3 607.6 C1111.5 603.5 1114.5 598.6 1116.0 596.8"/><path d="M1055.0 543.0 C1052.8 548.3 1045.0 565.2 1042.0 575.0 C1039.0 584.8 1038.8 593.7 1037.0 602.0 C1035.2 610.3 1032.0 621.2 1031.0 625.0"/><path d="M1031.0 560.0 C1034.2 558.7 1044.8 555.7 1050.0 552.0 C1055.2 548.3 1060.0 540.3 1062.0 538.0"/><path d="M16.3 672.4 C24.9 671.5 51.5 668.8 67.8 667.0 C84.1 665.2 98.1 662.5 113.9 661.6 C129.7 660.7 154.6 661.6 162.7 661.6"/><path d="M32.5 713.1 C42.9 714.5 73.2 719.4 94.9 721.2 C116.6 723.0 145.1 722.1 162.7 723.9 C180.3 725.7 182.6 728.7 200.7 732.1 C218.8 735.5 258.5 742.0 271.1 744.3 C283.8 746.5 275.7 745.4 276.6 745.6"/><path d="M135.6 662.9 C140.1 666.8 153.7 679.5 162.7 686.0 C171.7 692.5 174.4 697.7 189.8 702.2 C205.2 706.7 244.1 711.3 254.9 713.1"/><path d="M230.5 680.5 C232.8 683.2 239.0 690.0 244.0 696.8 C249.0 703.6 254.9 713.1 260.3 721.2 C265.7 729.3 272.1 737.0 276.6 745.6 C281.1 754.2 283.8 763.7 287.4 772.7 C291.0 781.7 296.0 791.7 298.3 799.8 C300.6 807.9 300.6 812.5 301.0 821.5 C301.4 830.5 301.0 848.7 301.0 854.1"/><path d="M94.9 721.2 C92.2 724.8 81.8 737.0 78.6 742.9 C75.4 748.8 76.4 752.4 75.9 756.5 C75.5 760.6 75.9 765.5 75.9 767.3"/><path d="M179.0 729.3 C182.6 737.0 199.8 767.2 200.7 775.4 C201.6 783.5 187.8 771.4 184.4 778.2 C181.0 785.0 179.9 806.6 180.3 816.1 C180.8 825.6 186.0 831.9 187.1 835.1"/><path d="M200.7 775.4 C207.9 772.7 231.8 763.3 244.0 759.2 C256.2 755.1 260.3 755.1 273.9 751.0 C287.5 746.9 309.0 737.9 325.4 734.8 C341.8 731.6 359.6 733.2 372.0 732.1 C384.4 731.0 390.3 729.7 400.0 728.0 C409.7 726.3 425.0 723.0 430.0 722.0"/><path d="M200.7 775.4 C207.9 776.5 229.6 780.8 244.0 782.2 C258.4 783.6 273.8 781.6 287.4 783.6 C301.0 785.6 311.3 791.7 325.4 794.4 C339.5 797.1 361.1 799.2 372.0 799.8 C382.9 800.4 387.8 798.3 391.0 798.0"/><path d="M326.7 715.8 C326.9 728.9 328.3 777.7 328.1 794.4 C327.9 811.1 325.8 812.5 325.4 816.1"/><path d="M271.1 744.3 C280.2 741.8 316.1 734.0 325.4 729.3 C334.7 724.5 318.9 718.5 326.7 715.8 C334.5 713.1 359.8 714.9 372.0 713.1 C384.2 711.3 391.2 708.9 400.0 705.0 C408.8 701.1 420.8 692.5 425.0 690.0"/><path d="M244.0 782.2 C244.2 785.6 242.7 796.0 245.4 802.5 C248.1 809.0 256.0 815.6 260.3 821.5 C264.6 827.4 264.8 835.1 271.1 837.8 C277.4 840.5 289.2 838.2 298.3 837.8 C307.4 837.3 313.1 835.1 325.4 835.1 C337.7 835.1 359.6 837.6 372.0 837.8 C384.4 837.9 388.7 835.6 400.0 836.0 C411.3 836.4 433.3 839.3 440.0 840.0"/><path d="M75.9 767.3 C79.1 770.9 87.2 783.1 94.9 789.0 C102.6 794.9 115.2 800.2 122.0 802.5 C128.8 804.8 134.2 799.3 135.6 802.5 C137.0 805.7 132.9 816.1 130.2 821.5 C127.5 826.9 127.4 831.5 119.3 835.1 C111.2 838.7 89.4 840.5 81.3 843.2 C73.2 845.9 72.3 850.0 70.5 851.4"/><path d="M135.6 802.5 C137.8 802.0 144.6 802.9 149.1 799.8 C153.6 796.6 156.8 787.2 162.7 783.6 C168.6 780.0 180.8 779.1 184.4 778.2"/><path d="M119.3 835.1 C120.7 839.2 123.8 854.1 127.4 859.5 C131.0 864.9 135.1 866.7 141.0 867.6 C146.9 868.5 154.6 865.8 162.7 864.9 C170.8 864.0 185.3 862.7 189.8 862.2"/><path d="M0.0 802.5 C4.5 803.4 19.4 804.8 27.1 808.0 C34.8 811.2 38.9 814.3 46.1 821.5 C53.3 828.7 64.2 842.8 70.5 851.4 C76.8 860.0 80.9 866.8 84.1 873.1 C87.3 879.4 88.6 886.4 89.5 889.0"/><path d="M0.0 832.0 C3.7 833.8 13.8 843.0 22.0 843.0 C30.2 843.0 42.3 836.7 49.0 832.0 C55.7 827.3 59.8 817.8 62.0 815.0"/><path d="M16.3 672.4 C17.2 675.3 19.3 683.2 22.0 690.0 C24.7 696.8 29.2 705.6 32.5 713.1 C35.8 720.6 38.2 727.2 42.0 735.0 C45.8 742.8 50.8 753.3 55.0 760.0 C59.2 766.7 65.0 772.5 67.0 775.0"/><path d="M67.8 667.0 C69.0 669.5 70.5 673.0 75.0 682.0 C79.5 691.0 91.6 714.7 94.9 721.2"/><path d="M0.0 760.0 C3.3 759.2 13.3 753.3 20.0 755.0 C26.7 756.7 33.7 764.2 40.0 770.0 C46.3 775.8 54.3 782.5 58.0 790.0 C61.7 797.5 61.3 810.8 62.0 815.0"/><path d="M130.0 821.0 C133.3 824.2 144.2 834.3 150.0 840.0 C155.8 845.7 160.0 850.0 165.0 855.0 C170.0 860.0 177.5 867.5 180.0 870.0"/><path d="M230.0 800.0 L245.0 802.0"/><path d="M271.0 838.0 C271.7 841.7 271.8 853.0 275.0 860.0 C278.2 867.0 287.5 876.7 290.0 880.0"/><path d="M345.0 760.0 C345.3 766.7 347.0 787.3 347.0 800.0 C347.0 812.7 345.3 830.0 345.0 836.0"/><path d="M301.0 800.0 L325.0 795.0"/><path d="M575.0 690.0 C576.3 691.7 582.2 695.8 583.0 700.0 C583.8 704.2 577.2 711.7 580.0 715.0 C582.8 718.3 596.7 719.2 600.0 720.0"/><path d="M594.0 692.0 C596.7 693.3 604.8 696.7 610.0 700.0 C615.2 703.3 620.0 705.3 625.0 712.0 C630.0 718.7 635.8 732.0 640.0 740.0 C644.2 748.0 647.5 751.7 650.0 760.0 C652.5 768.3 653.3 783.3 655.0 790.0 C656.7 796.7 659.2 798.3 660.0 800.0"/><path d="M627.0 680.0 C630.8 681.7 642.5 686.7 650.0 690.0 C657.5 693.3 663.7 699.2 672.0 700.0 C680.3 700.8 692.0 695.0 700.0 695.0 C708.0 695.0 712.7 701.0 720.0 700.0 C727.3 699.0 736.8 690.4 744.0 688.7 C751.2 687.0 759.2 688.2 763.0 690.0 C766.8 691.8 767.5 695.2 767.0 699.5 C766.5 703.8 762.3 709.9 760.3 715.8 C758.3 721.7 755.0 728.0 754.8 734.8 C754.6 741.6 754.8 751.1 758.9 756.5 C763.0 761.9 775.8 765.5 779.2 767.3"/><path d="M650.0 690.0 C650.8 695.0 653.3 710.0 655.0 720.0 C656.7 730.0 655.8 741.7 660.0 750.0 C664.2 758.3 673.3 764.2 680.0 770.0 C686.7 775.8 693.3 780.0 700.0 785.0 C706.7 790.0 715.0 795.8 720.0 800.0 C725.0 804.2 728.3 808.3 730.0 810.0"/><path d="M700.0 695.0 C700.8 700.8 705.0 719.2 705.0 730.0 C705.0 740.8 700.8 750.8 700.0 760.0 C699.2 769.2 700.0 780.8 700.0 785.0"/><path d="M660.0 750.0 C665.0 749.7 680.0 747.7 690.0 748.0 C700.0 748.3 711.0 750.5 720.0 752.0 C729.0 753.5 737.5 756.2 744.0 757.0 C750.5 757.8 756.4 756.6 758.9 756.5"/><path d="M650.0 790.0 C653.3 790.8 663.3 793.3 670.0 795.0 C676.7 796.7 685.0 797.5 690.0 800.0 C695.0 802.5 700.0 807.0 700.0 810.0 C700.0 813.0 691.7 816.7 690.0 818.0"/><path d="M720.0 700.0 C720.8 705.0 725.0 721.3 725.0 730.0 C725.0 738.7 720.8 748.3 720.0 752.0"/><path d="M672.0 655.0 C675.0 656.7 683.7 662.2 690.0 665.0 C696.3 667.8 703.3 671.5 710.0 672.0 C716.7 672.5 724.3 670.0 730.0 668.0 C735.7 666.0 741.7 661.3 744.0 660.0"/><path d="M744.0 648.0 C743.7 651.7 742.0 663.2 742.0 670.0 C742.0 676.8 743.7 685.6 744.0 688.7"/><path d="M700.0 655.0 L720.0 650.0"/><path d="M300.0 731.8 C304.5 731.3 315.8 732.5 327.0 729.1 C338.2 725.7 357.1 717.4 367.5 711.5 C377.9 705.6 382.4 699.2 389.1 694.0 C395.9 688.8 402.6 685.5 408.0 680.5 C413.4 675.5 416.6 669.7 421.5 664.3 C426.4 658.9 433.6 652.1 437.7 648.1 C441.8 644.1 442.9 643.4 445.8 640.0 C448.7 636.6 453.5 630.0 455.0 628.0"/><path d="M324.3 718.3 C324.8 725.0 326.8 744.8 327.0 758.8 C327.2 772.8 325.6 790.3 325.6 802.0 C325.6 813.7 327.2 820.0 327.0 829.0 C326.8 838.0 324.8 851.5 324.3 856.0"/><path d="M300.0 780.4 C304.5 779.5 316.6 775.5 327.0 775.0 C337.4 774.5 353.1 779.1 362.1 777.7 C371.1 776.4 374.7 768.7 381.0 766.9 C387.3 765.1 394.5 768.7 399.9 766.9 C405.3 765.1 411.1 757.9 413.4 756.1"/><path d="M362.1 777.7 C362.6 781.8 363.9 793.5 364.8 802.0 C365.7 810.5 364.8 821.8 367.5 829.0 C370.2 836.2 378.8 842.5 381.0 845.2"/><path d="M399.9 640.0 C401.2 644.5 405.8 658.0 408.0 667.0 C410.2 676.0 411.6 685.5 413.4 694.0 C415.2 702.5 417.0 711.5 418.8 718.3 C420.6 725.0 426.0 726.4 424.2 734.5 C422.4 742.6 411.6 758.4 408.0 766.9 C404.4 775.4 404.0 779.0 402.6 785.8 C401.2 792.5 400.1 800.2 399.9 807.4 C399.7 814.6 400.3 822.7 401.2 829.0 C402.1 835.3 404.6 842.5 405.3 845.2"/><path d="M424.2 734.5 C428.7 733.6 443.1 732.2 451.2 729.1 C459.3 726.0 465.6 720.1 472.8 715.6 C480.0 711.1 487.2 706.2 494.4 702.1 C501.6 698.0 509.2 695.3 516.0 691.3 C522.8 687.2 530.4 680.9 534.9 677.8 C539.4 674.6 541.6 673.3 543.0 672.4"/><path d="M437.7 648.1 C439.9 652.6 447.1 667.5 451.2 675.1 C455.2 682.8 459.3 687.2 462.0 694.0 C464.7 700.8 465.6 707.5 467.4 715.6 C469.2 723.7 471.4 733.6 472.8 742.6 C474.2 751.6 474.6 762.4 475.5 769.6 C476.4 776.8 475.9 780.4 478.2 785.8 C480.4 791.2 485.4 794.8 489.0 802.0 C492.6 809.2 497.8 821.8 499.8 829.0 C501.8 836.2 500.9 842.5 501.1 845.2"/><path d="M472.8 640.0 C472.4 644.5 471.5 658.0 470.1 667.0 C468.8 676.0 465.6 689.5 464.7 694.0"/><path d="M494.4 702.1 C494.8 706.6 496.2 721.5 497.1 729.1 C498.0 736.8 501.2 741.2 499.8 748.0 C498.4 754.8 493.1 764.2 489.0 769.6 C484.9 775.0 477.8 778.6 475.5 780.4"/><path d="M408.0 766.9 C412.5 768.2 427.8 771.0 435.0 775.0 C442.2 779.0 446.7 784.9 451.2 791.2 C455.7 797.5 459.3 805.6 462.0 812.8 C464.7 820.0 466.5 830.8 467.4 834.4"/><path d="M402.6 785.8 C405.3 788.5 412.5 798.9 418.8 802.0 C425.1 805.1 433.2 802.9 440.4 804.7 C447.6 806.5 458.4 811.4 462.0 812.8"/><path d="M367.5 829.0 C372.0 828.5 385.5 826.3 394.5 826.3 C403.5 826.3 412.9 826.8 421.5 829.0 C430.1 831.2 437.2 838.4 445.8 839.8 C454.4 841.1 463.6 837.3 472.8 837.1 C482.0 836.9 491.7 837.0 501.1 838.4 C510.6 839.8 524.8 844.1 529.5 845.2"/><path d="M381.0 802.0 C384.1 802.9 393.1 805.6 399.9 807.4 C406.6 809.2 414.8 813.2 421.5 812.8 C428.2 812.3 437.2 806.1 440.4 804.7"/><path d="M327.0 802.0 L364.8 802.0"/><path d="M451.2 675.1 C454.8 673.8 466.5 670.1 472.8 667.0 C479.1 663.9 483.6 659.8 489.0 656.2 C494.4 652.6 502.5 647.2 505.2 645.4"/><path d="M462.0 694.0 C466.5 692.2 480.9 687.7 489.0 683.2 C497.1 678.7 504.3 671.5 510.6 667.0 C516.9 662.5 524.1 658.0 526.8 656.2"/><path d="M516.0 691.3 C516.5 694.4 519.2 703.9 518.7 710.2 C518.2 716.5 516.4 722.8 513.3 729.1 C510.1 735.4 502.1 744.9 499.8 748.0"/><path d="M499.8 829.0 C502.5 827.2 511.1 822.7 516.0 818.2 C521.0 813.7 527.2 804.7 529.5 802.0"/><path d="M327.0 856.0 C331.5 855.5 345.0 855.1 354.0 853.3 C363.0 851.5 372.4 846.6 381.0 845.2 C389.6 843.9 396.3 843.9 405.3 845.2 C414.3 846.6 425.6 851.5 435.0 853.3 C444.4 855.1 452.1 855.5 462.0 856.0 C471.9 856.5 489.0 856.0 494.4 856.0"/><path d="M489.0 656.2 C490.0 658.8 494.1 664.4 495.0 672.0 C495.9 679.6 494.5 697.1 494.4 702.1"/><path d="M505.2 645.4 C507.7 646.2 515.0 649.6 520.0 650.0 C525.0 650.4 530.3 647.7 535.0 648.0 C539.7 648.3 545.8 651.3 548.0 652.0"/><path d="M445.8 640.0 C448.5 642.0 457.5 647.5 462.0 652.0 C466.5 656.5 471.0 664.5 472.8 667.0"/><path d="M559.4 617.0 C561.5 616.7 568.1 615.6 572.0 615.1 C575.9 614.6 578.0 614.3 583.0 614.3 C588.0 614.3 597.7 613.6 601.9 615.1 C606.1 616.6 608.2 620.6 608.2 623.0 C608.2 625.4 605.0 627.2 601.9 629.3 C598.8 631.4 593.0 634.0 589.3 635.6 C585.6 637.2 583.7 638.4 579.8 638.7 C575.9 639.0 569.1 637.7 565.7 637.2 C562.3 636.7 560.5 635.9 559.4 635.6"/><path d="M601.9 615.1 C602.4 613.8 602.9 610.4 605.0 607.2 C607.1 604.1 611.4 599.6 614.5 596.2 C617.6 592.8 621.5 590.2 623.9 586.8 C626.3 583.4 627.1 579.1 628.7 575.7 C630.3 572.3 632.1 568.1 633.4 566.3 C634.7 564.5 636.0 565.0 636.5 564.7"/><path d="M601.9 615.1 C604.5 615.9 612.4 619.3 617.6 619.8 C622.9 620.3 628.7 617.8 633.4 618.3 C638.1 618.8 641.3 622.0 646.0 623.0 C650.7 624.0 658.0 624.6 661.7 624.6 C665.4 624.6 665.0 623.5 668.0 623.0 C671.0 622.5 678.0 621.7 680.0 621.4"/><path d="M675.9 602.5 C675.1 604.1 672.5 608.6 671.2 612.0 C669.9 615.4 669.0 618.8 668.0 623.0 C667.0 627.2 666.5 633.0 664.9 637.2 C663.3 641.4 661.8 645.6 658.6 648.2 C655.5 650.8 649.7 651.6 646.0 652.9 C642.3 654.2 638.6 653.7 636.5 656.1 C634.4 658.5 634.4 663.7 633.4 667.1 C632.4 670.5 630.7 674.9 630.2 676.5"/><path d="M572.0 621.4 C573.3 623.8 576.9 631.1 579.8 635.6 C582.7 640.1 586.7 644.0 589.3 648.2 C591.9 652.4 593.8 656.6 595.6 660.8 C597.4 665.0 599.2 670.2 600.3 673.4 C601.3 676.5 599.5 676.3 601.9 679.7 C604.3 683.1 612.4 691.5 614.5 693.9"/><path d="M644.4 654.5 C645.7 656.1 649.9 660.8 652.3 663.9 C654.7 667.0 657.5 671.0 658.6 673.4 C659.7 675.8 663.6 677.0 658.6 678.1 C653.6 679.2 633.7 679.4 628.7 679.7"/><path d="M658.6 673.4 L680.0 670.2"/><path d="M520.0 648.0 C522.5 648.5 529.8 651.2 535.0 651.0 C540.2 650.8 546.9 649.6 551.0 647.0 C555.1 644.4 558.0 637.5 559.4 635.6"/><path d="M528.0 655.0 C529.8 655.5 536.3 655.2 539.0 658.0 C541.7 660.8 543.8 667.7 544.0 672.0 C544.2 676.3 542.5 681.3 540.0 684.0 C537.5 686.7 530.8 687.3 529.0 688.0"/><path d="M744.0 780.9 C746.7 780.0 754.4 777.7 760.3 775.4 C766.2 773.1 772.0 768.9 779.2 767.3 C786.4 765.7 796.9 767.2 803.7 765.9 C810.5 764.5 814.9 762.1 819.9 759.2 C824.9 756.3 828.1 751.5 833.5 748.3 C838.9 745.1 847.5 743.4 852.5 740.2 C857.5 737.0 859.7 731.6 863.3 729.3 C866.9 727.0 870.6 726.6 874.2 726.6 C877.8 726.6 881.9 729.8 885.0 729.3 C888.1 728.8 891.5 725.9 893.1 723.9 C894.7 721.9 892.7 719.5 894.5 717.2 C896.3 715.0 899.2 712.2 904.0 710.4 C908.8 708.6 918.0 707.2 923.0 706.3 C928.0 705.4 931.3 706.5 933.8 704.9 C936.3 703.3 936.5 700.4 937.9 696.8 C939.2 693.2 942.6 687.3 941.9 683.2 C941.2 679.1 935.6 676.2 933.8 672.4 C932.0 668.6 933.8 662.5 931.1 660.2 C928.4 657.9 919.8 659.0 917.5 658.8"/><path d="M885.0 658.8 C884.5 661.5 883.4 670.1 882.3 675.1 C881.2 680.1 878.2 684.2 878.2 688.7 C878.2 693.2 879.6 697.5 882.3 702.2 C885.0 707.0 892.5 714.7 894.5 717.2"/><path d="M787.4 648.0 C790.1 649.8 797.4 655.9 803.7 658.8 C810.0 661.7 817.6 665.4 825.3 665.6 C833.0 665.8 842.0 660.0 849.7 660.2 C857.4 660.4 865.5 666.3 871.4 667.0 C877.3 667.7 877.3 665.7 885.0 664.3 C892.7 662.9 909.4 660.2 917.5 658.8 C925.6 657.4 927.5 657.5 933.8 656.1 C940.1 654.8 949.5 653.4 955.5 650.7 C961.5 648.0 966.4 644.5 970.0 640.0 C973.6 635.5 976.0 626.6 977.2 623.9"/><path d="M955.5 650.7 C956.4 653.0 957.7 659.3 960.9 664.3 C964.1 669.3 969.8 677.1 974.5 680.5 C979.2 683.9 986.9 683.9 989.4 684.6"/><path d="M730.0 800.0 C732.3 799.7 739.0 799.2 744.0 798.0 C749.0 796.8 754.4 793.7 760.3 793.0 C766.2 792.3 776.1 793.8 779.2 794.0"/><path d="M744.0 733.0 L754.8 734.8"/><path d="M744.0 757.0 C746.5 756.9 754.4 756.2 758.9 756.5 C763.4 756.8 767.6 757.2 771.0 759.0 C774.4 760.8 777.8 765.9 779.2 767.3"/></g><g fill="none" stroke="#b2b2b2" stroke-width="1.15"><path d="M545.5 615.8 C548.2 615.6 555.5 614.4 561.8 614.4 C568.1 614.4 576.7 614.7 583.5 615.8 C590.3 616.9 594.8 619.9 602.5 621.2 C610.2 622.6 618.3 623.7 629.6 623.9 C640.9 624.1 659.0 622.1 670.3 622.6 C681.6 623.1 685.1 626.9 697.4 626.6 C709.7 626.3 732.6 623.7 744.0 621.0 C755.4 618.3 758.9 611.5 765.7 610.4 C772.5 609.3 777.0 615.1 784.7 614.4 C792.4 613.7 803.2 607.6 811.8 606.3 C820.4 604.9 829.4 604.7 836.2 606.3 C843.0 607.9 847.5 611.5 852.5 615.8 C857.5 620.1 861.9 626.7 866.0 632.1 C870.1 637.5 873.9 643.2 876.9 648.0 C879.9 652.8 882.8 658.8 884.0 661.0"/><path d="M917.5 648.0 C920.2 645.4 925.2 635.9 933.8 632.1 C942.4 628.3 961.9 627.6 969.1 625.3 C976.3 623.0 972.7 623.2 977.2 618.5 C981.7 613.8 989.9 602.7 996.2 596.8 C1002.5 590.9 1007.4 588.7 1015.1 583.3 C1022.8 577.9 1033.2 571.1 1042.3 564.3 C1051.3 557.5 1059.9 550.3 1069.4 542.6 C1078.9 534.9 1091.4 522.5 1099.2 518.2 C1107.0 513.9 1113.2 517.0 1116.0 516.8"/><path d="M917.5 648.0 C915.4 649.2 910.6 652.8 905.0 655.0 C899.4 657.2 887.5 660.0 884.0 661.0"/></g><g fill="none" stroke="#f7bd8b" stroke-width="1.3"><path d="M457.4 726.6 C461.2 726.8 471.2 728.2 480.5 728.0 C489.8 727.8 504.0 725.1 513.0 725.3 C522.0 725.5 528.8 730.2 534.7 729.3 C540.6 728.4 542.8 721.0 548.2 719.9 C553.6 718.8 560.4 721.0 567.2 722.6 C574.0 724.2 581.7 729.3 588.9 729.3 C596.1 729.3 604.3 724.0 610.6 722.6 C616.9 721.2 624.2 721.0 626.9 720.7"/></g><g fill="none" stroke="#f7902f" stroke-width="2.4" stroke-linecap="round" stroke-linejoin="round"><path d="M1116.0 506.8 C1112.3 507.1 1099.8 507.2 1093.8 508.7 C1087.8 510.1 1084.7 512.1 1080.2 515.5 C1075.7 518.9 1071.7 524.5 1066.7 529.0 C1061.7 533.5 1055.4 537.6 1050.4 542.6 C1045.4 547.6 1041.8 553.4 1036.8 558.8 C1031.8 564.2 1026.0 570.1 1020.6 575.1 C1015.2 580.1 1009.7 585.1 1004.3 588.7 C998.9 592.3 992.1 594.1 988.0 596.8 C983.9 599.5 981.7 601.3 979.9 604.9 C978.1 608.5 979.5 614.0 977.2 618.5 C974.9 623.0 970.8 628.0 966.3 632.1 C961.8 636.2 955.5 640.2 950.1 642.9 C944.7 645.5 941.0 646.3 933.8 648.0 C926.6 649.7 915.7 652.0 906.7 652.9 C897.7 653.8 888.6 653.7 879.6 653.4 C870.6 653.1 861.5 651.8 852.5 651.3 C843.5 650.8 833.0 651.2 825.3 650.7 C817.6 650.2 814.1 650.0 806.4 648.0 C798.7 646.0 786.9 640.5 779.2 638.8 C771.5 637.0 766.2 635.7 760.3 637.5 C754.4 639.3 752.2 646.8 744.0 649.4 C735.8 652.0 720.0 651.6 710.9 653.4 C701.8 655.2 696.4 659.3 689.2 660.2 C682.0 661.1 672.9 659.9 667.5 658.8 C662.1 657.7 658.5 654.3 656.7 653.4"/><path d="M678.4 623.9 C678.0 625.3 678.0 628.1 675.7 632.1 C673.4 636.1 668.0 644.0 664.8 648.0 C661.6 652.0 660.3 652.9 656.7 656.1 C653.1 659.3 648.1 663.1 643.1 667.0 C638.1 670.9 635.0 676.3 626.9 679.2 C618.8 682.1 602.4 684.6 594.3 684.6 C586.2 684.6 583.5 680.4 578.1 679.2 C572.7 678.0 567.7 678.0 561.8 677.3 C555.9 676.6 546.0 675.5 542.8 675.1"/><path d="M372.0 803.9 C373.4 800.1 376.9 787.9 380.1 780.9 C383.3 773.9 386.5 767.8 391.0 761.9 C395.5 756.0 401.8 750.4 407.2 745.6 C412.6 740.9 416.7 737.2 423.5 733.4 C430.3 729.6 442.2 725.0 447.9 722.6 C453.5 720.2 455.8 719.6 457.4 719.0"/><path d="M372.0 805.3 C368.8 806.0 358.0 808.4 352.5 809.3 C347.0 810.2 347.0 810.1 338.9 810.7 C330.8 811.3 313.2 812.2 303.7 812.9 C294.2 813.6 289.2 813.4 282.0 814.8 C274.8 816.2 267.5 818.1 260.3 821.5 C253.1 824.9 244.9 831.2 238.6 835.1 C232.3 839.0 225.2 841.7 222.3 844.6 C219.4 847.5 221.1 849.1 221.0 852.7 C220.9 856.3 221.4 863.8 221.5 866.0"/></g><path d="M647.2 166.0 L639.1 175.5 L632.3 180.9 L621.5 187.7 L618.7 193.1 L605.2 201.2 L588.9 206.7 L583.5 202.6 L565.9 205.3 L556.4 198.5 L542.8 199.9 L534.7 210.7 L523.8 235.1 L518.4 237.9 L502.1 241.9 L494.0 235.1 L487.2 243.3 L483.2 239.8 L450.6 240.6 L442.5 237.9 L428.9 239.2 L420.8 234.3 L412.7 237.9 L405.9 239.8 L424.9 278.5 L416.7 282.6 L415.4 293.4 L407.2 317.8 L412.7 331.4 L420.3 343.6 L419.4 351.7 L412.7 351.7 L401.8 345.0 L388.3 343.6 L372.0 347.7 L363.0 347.7 L352.5 335.5 L348.4 330.9 L336.2 329.5 L322.7 322.7 L314.5 325.4 L301.0 324.0 L295.6 324.6 L284.7 314.6 L277.9 310.5 L267.1 312.4 L261.7 316.5 L260.3 328.7 L256.2 339.5 L249.5 343.6 L247.3 347.7 L248.9 353.1 L238.6 363.1 L215.6 349.8 L203.4 353.9 L199.3 359.9 L195.2 369.4 L189.8 374.8 L186.6 378.9 L188.4 388.3 L200.7 392.4 L207.4 393.2 L214.2 401.9 L215.6 407.0 L211.5 423.3 L212.9 431.4 L219.6 434.1 L220.2 442.2 L210.1 450.4 L211.5 461.2 L208.8 477.5 L206.1 493.8 L207.4 495.9 L221.0 495.1 L223.7 499.2 L223.7 508.7 L230.5 520.9 L245.4 527.7 L261.7 530.4 L263.0 545.3 L271.1 552.1 L284.7 564.3 L291.5 565.6 L294.2 573.8 L311.8 562.9 L324.0 580.5 L329.4 609.0 L310.5 607.6 L309.1 617.1 L310.5 623.9 L306.4 632.1 L314.5 648.0 L325.4 664.3 L324.0 677.8 L271.1 664.3 L249.5 648.0 L235.9 632.1 L238.6 640.2 L233.2 648.0 L231.8 658.8 L206.1 654.8 L200.7 648.0 L207.4 638.8 L189.8 615.8 L175.7 588.7 L157.3 591.4 L132.9 606.3 L73.2 619.9 L63.7 614.4 L56.9 617.1 L48.8 610.4 L40.7 621.2 L27.1 637.5 L17.6 648.0 L12.0 654.0 L0.0 651.0" fill="none" stroke="#fff" stroke-opacity=".55" stroke-width="3.2" stroke-linejoin="round"/><path d="M647.2 166.0 L639.1 175.5 L632.3 180.9 L621.5 187.7 L618.7 193.1 L605.2 201.2 L588.9 206.7 L583.5 202.6 L565.9 205.3 L556.4 198.5 L542.8 199.9 L534.7 210.7 L523.8 235.1 L518.4 237.9 L502.1 241.9 L494.0 235.1 L487.2 243.3 L483.2 239.8 L450.6 240.6 L442.5 237.9 L428.9 239.2 L420.8 234.3 L412.7 237.9 L405.9 239.8 L424.9 278.5 L416.7 282.6 L415.4 293.4 L407.2 317.8 L412.7 331.4 L420.3 343.6 L419.4 351.7 L412.7 351.7 L401.8 345.0 L388.3 343.6 L372.0 347.7 L363.0 347.7 L352.5 335.5 L348.4 330.9 L336.2 329.5 L322.7 322.7 L314.5 325.4 L301.0 324.0 L295.6 324.6 L284.7 314.6 L277.9 310.5 L267.1 312.4 L261.7 316.5 L260.3 328.7 L256.2 339.5 L249.5 343.6 L247.3 347.7 L248.9 353.1 L238.6 363.1 L215.6 349.8 L203.4 353.9 L199.3 359.9 L195.2 369.4 L189.8 374.8 L186.6 378.9 L188.4 388.3 L200.7 392.4 L207.4 393.2 L214.2 401.9 L215.6 407.0 L211.5 423.3 L212.9 431.4 L219.6 434.1 L220.2 442.2 L210.1 450.4 L211.5 461.2 L208.8 477.5 L206.1 493.8 L207.4 495.9 L221.0 495.1 L223.7 499.2 L223.7 508.7 L230.5 520.9 L245.4 527.7 L261.7 530.4 L263.0 545.3 L271.1 552.1 L284.7 564.3 L291.5 565.6 L294.2 573.8 L311.8 562.9 L324.0 580.5 L329.4 609.0 L310.5 607.6 L309.1 617.1 L310.5 623.9 L306.4 632.1 L314.5 648.0 L325.4 664.3 L324.0 677.8 L271.1 664.3 L249.5 648.0 L235.9 632.1 L238.6 640.2 L233.2 648.0 L231.8 658.8 L206.1 654.8 L200.7 648.0 L207.4 638.8 L189.8 615.8 L175.7 588.7 L157.3 591.4 L132.9 606.3 L73.2 619.9 L63.7 614.4 L56.9 617.1 L48.8 610.4 L40.7 621.2 L27.1 637.5 L17.6 648.0 L12.0 654.0 L0.0 651.0" fill="none" stroke="#969696" stroke-width="1.4" stroke-linejoin="round"/><defs><linearGradient id="bg" x1="0" y1="0" x2="0" y2="1"><stop offset="0" stop-color="#f9c27f"/><stop offset="1" stop-color="#f6a85a"/></linearGradient></defs><rect x="414" y="719.2" width="35.2" height="15.8" rx="3.2" fill="url(#bg)" stroke="#f3a860" stroke-width=".8"/><text x="431.6" y="730.9000000000001" font-size="10.4" font-weight="700" fill="#3d40a0" fill-opacity=".93" text-anchor="middle" textLength="25.5" lengthAdjust="spacingAndGlyphs">CT.01</text><rect x="593.1" y="677.6" width="35.2" height="15.8" rx="3.2" fill="url(#bg)" stroke="#f3a860" stroke-width=".8"/><text x="610.7" y="689.3000000000001" font-size="10.4" font-weight="700" fill="#3d40a0" fill-opacity=".93" text-anchor="middle" textLength="25.5" lengthAdjust="spacingAndGlyphs">CT.01</text><rect x="1045" y="525.5" width="35.2" height="15.8" rx="3.2" fill="url(#bg)" stroke="#f3a860" stroke-width=".8"/><text x="1062.6" y="537.2" font-size="10.4" font-weight="700" fill="#3d40a0" fill-opacity=".93" text-anchor="middle" textLength="25.5" lengthAdjust="spacingAndGlyphs">CT.01</text><rect x="732.7" y="634.9" width="35.2" height="15.8" rx="3.2" fill="url(#bg)" stroke="#f3a860" stroke-width=".8"/><text x="750.3000000000001" y="646.6" font-size="10.4" font-weight="700" fill="#3d40a0" fill-opacity=".93" text-anchor="middle" textLength="25.5" lengthAdjust="spacingAndGlyphs">CT.01</text><rect x="881.4" y="644.2" width="35.2" height="15.8" rx="3.2" fill="url(#bg)" stroke="#f3a860" stroke-width=".8"/><text x="899.0" y="655.9000000000001" font-size="10.4" font-weight="700" fill="#3d40a0" fill-opacity=".93" text-anchor="middle" textLength="25.5" lengthAdjust="spacingAndGlyphs">CT.01</text><rect x="304.3" y="805" width="35.2" height="15.8" rx="3.2" fill="url(#bg)" stroke="#f3a860" stroke-width=".8"/><text x="321.90000000000003" y="816.7" font-size="10.4" font-weight="700" fill="#3d40a0" fill-opacity=".93" text-anchor="middle" textLength="25.5" lengthAdjust="spacingAndGlyphs">CT.01</text><rect x="196" y="845.2" width="35.2" height="15.8" rx="3.2" fill="url(#bg)" stroke="#f3a860" stroke-width=".8"/><text x="213.6" y="856.9000000000001" font-size="10.4" font-weight="700" fill="#3d40a0" fill-opacity=".93" text-anchor="middle" textLength="25.5" lengthAdjust="spacingAndGlyphs">CT.01</text><g font-size="12" fill="#4a4a4a" stroke="#fbf8ee" stroke-width="2.6" stroke-linejoin="round" paint-order="stroke"><text x="561.3" y="290.2" textLength="88.7" lengthAdjust="spacingAndGlyphs">TX. Phước Long</text><text x="438.4" y="355.9" textLength="76.5" lengthAdjust="spacingAndGlyphs">TX. Bình Long</text><text x="880.1" y="391.2" textLength="66.7" lengthAdjust="spacingAndGlyphs">TP. Bảo Lộc</text><text x="442.5" y="437.0" textLength="89.5" lengthAdjust="spacingAndGlyphs">TX. Chơn Thành</text><text x="439.2" y="539.2" textLength="64" lengthAdjust="spacingAndGlyphs">TX. Bến Cát</text><text x="343" y="584.7" textLength="86.8" lengthAdjust="spacingAndGlyphs">TX. Trảng Bàng</text><text x="191.2" y="678.0" textLength="84.8" lengthAdjust="spacingAndGlyphs">TX. Kiến Tường</text><text x="607.4" y="749.0" textLength="64.2" lengthAdjust="spacingAndGlyphs">TX. Phú Mỹ</text><text x="466.9" y="829.8000000000001" textLength="69.7" lengthAdjust="spacingAndGlyphs">TX. Gò Công</text><text x="609.8" y="835.8000000000001" textLength="76.2" lengthAdjust="spacingAndGlyphs">TP. Vũng Tàu</text><text x="361" y="875.9000000000001" textLength="63.9" lengthAdjust="spacingAndGlyphs">TP. Bến Tre</text><text x="-36" y="669.2" textLength="55.5" lengthAdjust="spacingAndGlyphs">TP. Châu</text></g><g font-size="15.6" fill="#161616" stroke="#fbf8ee" stroke-width="3" stroke-linejoin="round" paint-order="stroke"><text x="259.8" y="474.9" textLength="61.5" lengthAdjust="spacingAndGlyphs">Tây Ninh</text><text x="538.8" y="392.5" textLength="78.6" lengthAdjust="spacingAndGlyphs">Bình Phước</text><text x="837.5" y="220.3" textLength="69.2" lengthAdjust="spacingAndGlyphs">Đắk Nông</text><text x="980.4" y="618.0" textLength="78.1" lengthAdjust="spacingAndGlyphs">Bình Thuận</text><text x="84.1" y="791.2" textLength="76.4" lengthAdjust="spacingAndGlyphs">Đồng Tháp</text><text x="19.5" y="817.0" textLength="62.4" lengthAdjust="spacingAndGlyphs">An Giang</text><text x="467.4" y="673.0" textLength="86.8" lengthAdjust="spacingAndGlyphs">Hồ Chí Minh</text><text x="628.2" y="780.4" textLength="113.9" lengthAdjust="spacingAndGlyphs">Bà Rịa-Vũng Tàu</text><text x="464.2" y="569.8" textLength="82" lengthAdjust="spacingAndGlyphs">Bình Dương</text><text x="523.5" y="611.8" textLength="62.2" lengthAdjust="spacingAndGlyphs">Đồng Nai</text></g><defs><linearGradient id="pg" x1="0" y1="0" x2="0" y2="1"><stop offset="0" stop-color="#6fd354"/><stop offset="1" stop-color="#2fa32c"/></linearGradient></defs><g transform="translate(277.1 326)"><path d="M0 9.2 C-2.5 6 -7 3.5 -7 -1.6 A7 7 0 0 1 7 -1.6 C7 3.5 2.5 6 0 9.2Z" fill="url(#pg)"/><path d="M0 -6 L2.3 1.6 H.7 V3.6 H-.7 V1.6 H-2.3Z" fill="#fff"/></g><g transform="translate(214.2 373.4)"><path d="M0 9.2 C-2.5 6 -7 3.5 -7 -1.6 A7 7 0 0 1 7 -1.6 C7 3.5 2.5 6 0 9.2Z" fill="url(#pg)"/><path d="M0 -6 L2.3 1.6 H.7 V3.6 H-.7 V1.6 H-2.3Z" fill="#fff"/></g><g transform="translate(768.4 328.7)"><path d="M0 9.2 C-2.5 6 -7 3.5 -7 -1.6 A7 7 0 0 1 7 -1.6 C7 3.5 2.5 6 0 9.2Z" fill="url(#pg)"/><path d="M0 -6 L2.3 1.6 H.7 V3.6 H-.7 V1.6 H-2.3Z" fill="#fff"/></g><g transform="translate(998.9 261.4)"><path d="M0 9.2 C-2.5 6 -7 3.5 -7 -1.6 A7 7 0 0 1 7 -1.6 C7 3.5 2.5 6 0 9.2Z" fill="url(#pg)"/><path d="M0 -6 L2.3 1.6 H.7 V3.6 H-.7 V1.6 H-2.3Z" fill="#fff"/></g><g transform="translate(639.1 472.1)"><path d="M0 9.2 C-2.5 6 -7 3.5 -7 -1.6 A7 7 0 0 1 7 -1.6 C7 3.5 2.5 6 0 9.2Z" fill="url(#pg)"/><path d="M0 -6 L2.3 1.6 H.7 V3.6 H-.7 V1.6 H-2.3Z" fill="#fff"/></g><g transform="translate(735.3 434.1)"><path d="M0 9.2 C-2.5 6 -7 3.5 -7 -1.6 A7 7 0 0 1 7 -1.6 C7 3.5 2.5 6 0 9.2Z" fill="url(#pg)"/><path d="M0 -6 L2.3 1.6 H.7 V3.6 H-.7 V1.6 H-2.3Z" fill="#fff"/></g><g transform="translate(906.1 561)"><path d="M0 9.2 C-2.5 6 -7 3.5 -7 -1.6 A7 7 0 0 1 7 -1.6 C7 3.5 2.5 6 0 9.2Z" fill="url(#pg)"/><path d="M0 -6 L2.3 1.6 H.7 V3.6 H-.7 V1.6 H-2.3Z" fill="#fff"/></g><g transform="translate(74.6 692.7)"><path d="M0 9.2 C-2.5 6 -7 3.5 -7 -1.6 A7 7 0 0 1 7 -1.6 C7 3.5 2.5 6 0 9.2Z" fill="url(#pg)"/><path d="M0 -6 L2.3 1.6 H.7 V3.6 H-.7 V1.6 H-2.3Z" fill="#fff"/></g><defs><filter id="ms" x="-30%" y="-30%" width="160%" height="170%"><feDropShadow dx="0" dy="1" stdDeviation="1.3" flood-color="#000" flood-opacity=".28"/></filter></defs><g transform="translate(407.2 500.5)" filter="url(#ms)"><path d="M-5 17 L0 23.3 L5 17Z" fill="#fff"/><circle r="18.6" fill="#fff"/><circle r="17.1" fill="#00e000"/><text y="6.3" font-size="17.8" font-weight="700" fill="#fff" text-anchor="middle" letter-spacing=".2">20</text></g><g transform="translate(545.5 469.9)" filter="url(#ms)"><path d="M-5 17 L0 23.3 L5 17Z" fill="#fff"/><circle r="18.6" fill="#fff"/><circle r="17.1" fill="#00e000"/><text y="6.3" font-size="17.8" font-weight="700" fill="#fff" text-anchor="middle" letter-spacing=".2">23</text></g><g transform="translate(485.9 490.5)" filter="url(#ms)"><path d="M-5 17 L0 23.3 L5 17Z" fill="#fff"/><circle r="18.6" fill="#fff"/><circle r="17.1" fill="#00e000"/><text y="6.3" font-size="17.8" font-weight="700" fill="#fff" text-anchor="middle" letter-spacing=".2">31</text></g><g transform="translate(519.8 515.5)" filter="url(#ms)"><path d="M-5 17 L0 23.3 L5 17Z" fill="#fff"/><circle r="18.6" fill="#fff"/><circle r="17.1" fill="#00e000"/><text y="6.3" font-size="17.8" font-weight="700" fill="#fff" text-anchor="middle" letter-spacing=".2">25</text></g><g transform="translate(485.9 531.7)" filter="url(#ms)"><path d="M-5 17 L0 23.3 L5 17Z" fill="#fff"/><circle r="18.6" fill="#fff"/><circle r="17.1" fill="#00e000"/><text y="6.3" font-size="17.8" font-weight="700" fill="#fff" text-anchor="middle" letter-spacing=".2">27</text></g><g transform="translate(545 557.5)" filter="url(#ms)"><path d="M-5 17 L0 23.3 L5 17Z" fill="#fff"/><circle r="18.6" fill="#fff"/><circle r="17.1" fill="#00e000"/></g><g transform="translate(547.7 557.5)" filter="url(#ms)"><path d="M-5 17 L0 23.3 L5 17Z" fill="#fff"/><circle r="18.6" fill="#fff"/><circle r="17.1" fill="#00e000"/><text y="6.3" font-size="17.8" font-weight="700" fill="#fff" text-anchor="middle" letter-spacing=".2">16</text></g><g transform="translate(504.9 560.2)" filter="url(#ms)"><path d="M-5 17 L0 23.3 L5 17Z" fill="#fff"/><circle r="18.6" fill="#fff"/><circle r="17.1" fill="#00e000"/><text y="6.3" font-size="17.8" font-weight="700" fill="#fff" text-anchor="middle" letter-spacing=".2">28</text></g><g transform="translate(579.4 567)" filter="url(#ms)"><path d="M-5 17 L0 23.3 L5 17Z" fill="#fff"/><circle r="18.6" fill="#fff"/><circle r="17.1" fill="#00e000"/><text y="6.3" font-size="17.8" font-weight="700" fill="#fff" text-anchor="middle" letter-spacing=".2">37</text></g><g transform="translate(492.7 589.2)" filter="url(#ms)"><path d="M-5 17 L0 23.3 L5 17Z" fill="#fff"/><circle r="18.6" fill="#fff"/><circle r="17.1" fill="#00e000"/><text y="6.3" font-size="17.8" font-weight="700" fill="#fff" text-anchor="middle" letter-spacing=".2">23</text></g><g transform="translate(526.5 590)" filter="url(#ms)"><path d="M-5 17 L0 23.3 L5 17Z" fill="#fff"/><circle r="18.6" fill="#fff"/><circle r="17.1" fill="#00e000"/></g><g transform="translate(518.4 590)" filter="url(#ms)"><path d="M-5 17 L0 23.3 L5 17Z" fill="#fff"/><circle r="18.6" fill="#fff"/><circle r="17.1" fill="#00e000"/><text y="6.3" font-size="17.8" font-weight="700" fill="#fff" text-anchor="middle" letter-spacing=".2">43</text></g><g transform="translate(510.5 617.8)" filter="url(#ms)"><path d="M-5 17 L0 23.3 L5 17Z" fill="#fff"/><circle r="18.6" fill="#fff"/><circle r="17.1" fill="#00e000"/></g><g transform="translate(514.8 618.2)" filter="url(#ms)"><path d="M-5 17 L0 23.3 L5 17Z" fill="#fff"/><circle r="18.6" fill="#fff"/><circle r="17.1" fill="#00e000"/><text y="6.3" font-size="17.8" font-weight="700" fill="#fff" text-anchor="middle" letter-spacing=".2">31</text></g><g transform="translate(530.5 621)" filter="url(#ms)"><path d="M-5 17 L0 23.3 L5 17Z" fill="#fff"/><circle r="18.6" fill="#fff"/><circle r="17.1" fill="#00e000"/></g><g transform="translate(533.9 621.2)" filter="url(#ms)"><path d="M-5 17 L0 23.3 L5 17Z" fill="#fff"/><circle r="18.6" fill="#fff"/><circle r="17.1" fill="#00e000"/><text y="6.3" font-size="17.8" font-weight="700" fill="#fff" text-anchor="middle" letter-spacing=".2">19</text></g></svg></div>
<div id="tog"><svg class="abs" style="left:8.5px;top:18.5px" width="7" height="10" viewBox="0 0 7 10"><path d="M0.5 0.3L6.3 5 0.5 9.7z" fill="#444"/></svg></div>
<div id="loc"><svg class="abs" style="left:10px;top:10.1px" width="20" height="20" viewBox="0 0 22 22"><circle cx="11" cy="11.3" r="6.2" fill="none" stroke="#484848" stroke-width="1.9"/><circle cx="11" cy="11.3" r="3" fill="#484848"/><path d="M11 1.8v3.6M11 17.2v3.6M1.5 11.3h3.6M16.9 11.3h3.6" stroke="#484848" stroke-width="1.9"/></svg></div>
<div id="legend"><span style="left:37px">Good</span><span style="left:104.5px">Moderate</span><span style="left:170px">Unhealthy for</span><span style="left:261.5px">Unhealthy</span><span style="left:328.5px">Very</span><span style="left:419px">Hazardous</span></div>
<div id="panel">
<div id="srow"><div id="inp">Enter station name ...</div><div id="aqi">AQI</div></div>
<div class="it" style="top:56.9px;height:65.02px"><div class="tx" style="top:9.01px"><span style="letter-spacing:0.297px">CN4 - Công ty Orion, đường NA3, KCN Mỹ</span><br><span style="letter-spacing:-0.246px">Phước II</span></div><div class="c" style="top:9.01px">27</div></div><div class="it" style="top:121.92px;height:62.6px"><div class="tx" style="top:19.80px"><span style="letter-spacing:0.268px">GT1 - Ngã tư Miếu Ông Cù</span></div><div class="c" style="top:7.80px">45</div></div><div class="it" style="top:184.52px;height:65.02px"><div class="tx" style="top:9.01px"><span style="letter-spacing:0.230px">CN2 - Công ty Victory cách CCN Thuận Giao</span><br><span style="letter-spacing:0.171px">300m (điểm GS cũ)</span></div><div class="c" style="top:9.01px">43</div></div><div class="it" style="top:249.54px;height:62.6px"><div class="tx" style="top:19.80px"><span style="letter-spacing:0.305px">N - Nghĩa trang Liệt sĩ huyện Phú Giáo</span></div><div class="c" style="top:7.80px">23</div></div><div class="it" style="top:312.14px;height:65.02px"><div class="tx" style="top:9.01px"><span style="letter-spacing:0.389px">ĐT4 - Trung tâm hành chính, thành phố mới</span><br><span style="letter-spacing:0.083px">Bình Dương</span></div><div class="c" style="top:9.01px">28</div></div><div class="it" style="top:377.16px;height:62.6px"><div class="tx" style="top:19.80px"><span style="letter-spacing:0.415px">ĐT5 - Khu trung tấm thị trấn Mỹ Phước</span></div><div class="c" style="top:7.80px">16</div></div><div class="it" style="top:439.76px;height:65.02px"><div class="tx" style="top:9.01px"><span style="letter-spacing:0.127px">ĐT3 - Trụ sở TT QT TNMT - số 26 Huỳnh Văn</span><br><span style="letter-spacing:0.484px">Nghệ</span></div><div class="c" style="top:9.01px">23</div></div><div class="it" style="top:504.78px;height:62.6px"><div class="tx" style="top:19.80px"><span style="letter-spacing:0.295px">ĐT2 - UBND thị xã Thuận An</span></div><div class="c" style="top:7.80px">29</div></div><div class="it" style="top:567.38px;height:62.6px"><div class="tx" style="top:19.80px"><span style="letter-spacing:0.210px">ĐT6 - Thị trấn Uyên Hưng, huyện Tân Uyên</span></div><div class="c" style="top:7.80px">22</div></div><div class="it" style="top:629.98px;height:65.02px"><div class="tx" style="top:9.01px"><span style="letter-spacing:0.429px">CN5 - Khu đô thị - khu công nghiệp Bàu</span><br><span style="letter-spacing:-0.051px">Bàng</span></div><div class="c" style="top:9.01px">31</div></div><div class="it" style="top:695.0px;height:62.6px"><div class="tx" style="top:19.80px"><span style="letter-spacing:0.188px">GT2 - Cầu ngã 3 cổng xanh</span></div><div class="c" style="top:7.80px">25</div></div>
</div>
</body></html>
